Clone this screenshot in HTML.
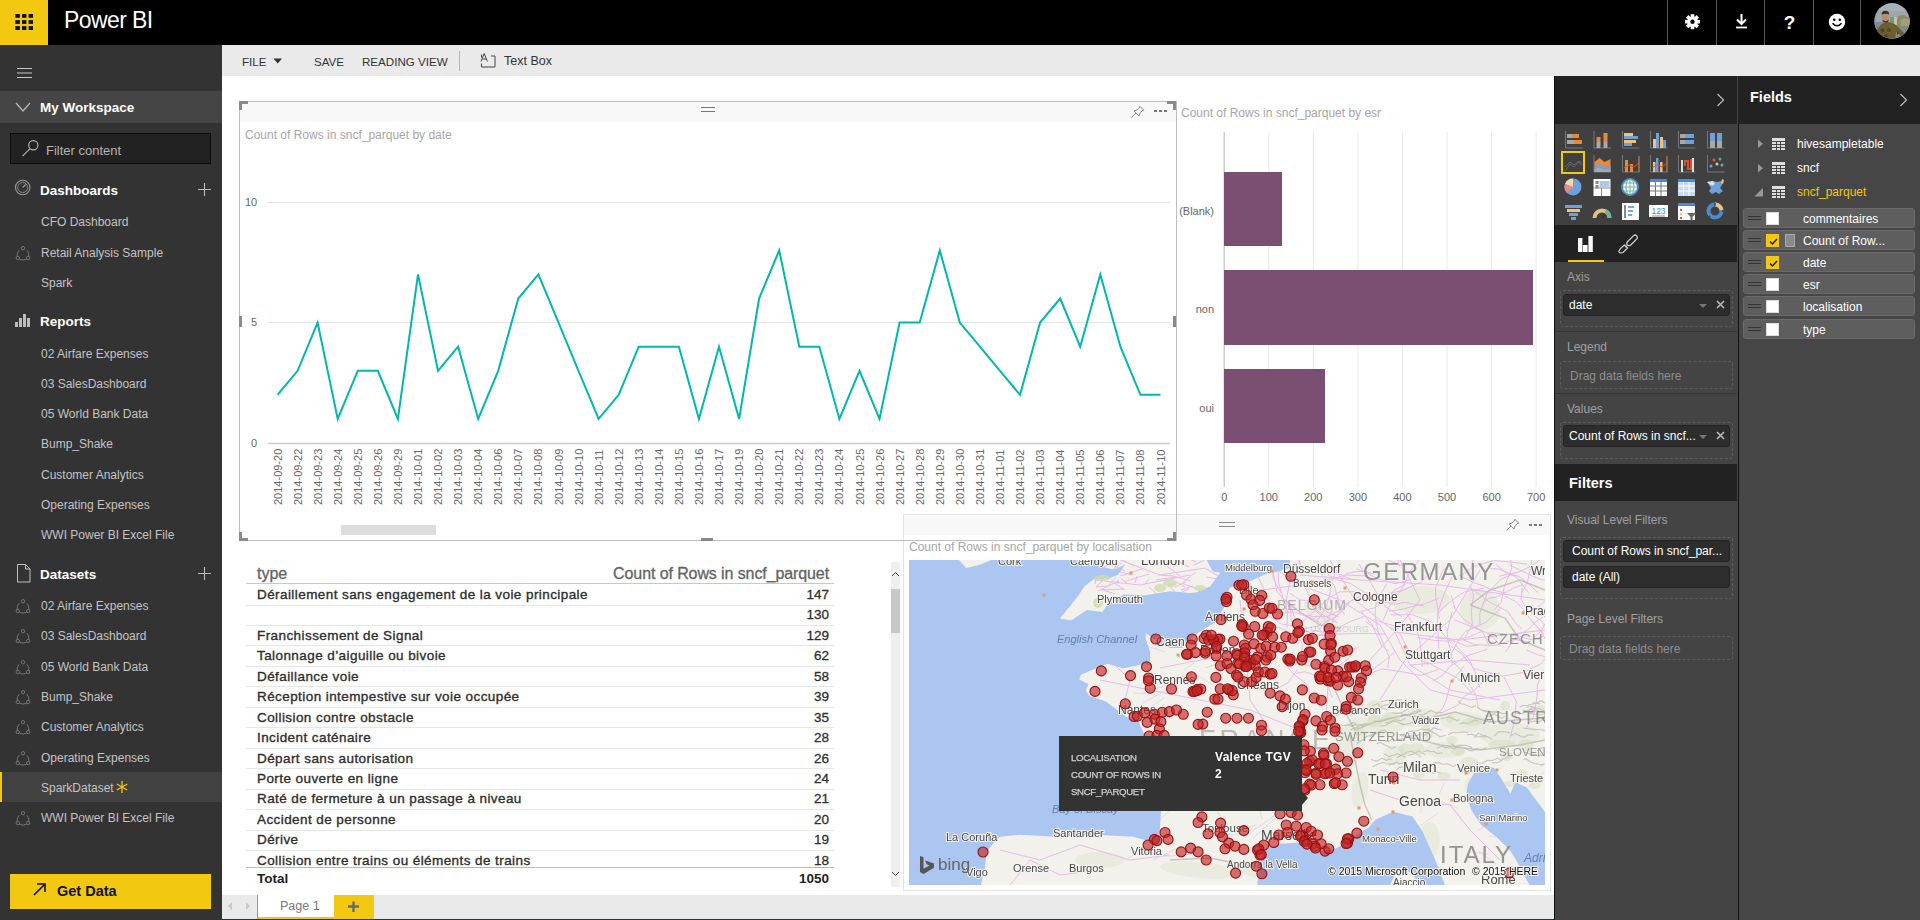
<!DOCTYPE html>
<html><head><meta charset="utf-8">
<style>
*{margin:0;padding:0;box-sizing:border-box}
html,body{width:1920px;height:920px;overflow:hidden;background:#fff;font-family:"Liberation Sans",sans-serif}
.a{position:absolute}
.t{position:absolute;white-space:nowrap;line-height:1}
#top{left:0;top:0;width:1920px;height:45px;background:#000}
#nav{left:0;top:45px;width:222px;height:875px;background:#333}
.ni{position:absolute;left:41px;font-size:12px;color:#c4c4c4;white-space:nowrap;line-height:1}
.nh{position:absolute;left:40px;font-size:13.5px;font-weight:bold;color:#fff;white-space:nowrap;line-height:1}
.dsi{position:absolute;left:16px;width:13px;height:13px}
#tb{left:222px;top:45px;width:1698px;height:31px;background:#eaeaea}
.tbt{position:absolute;font-size:11.6px;color:#333;top:55px;white-space:nowrap;line-height:1}
#viz{left:1554px;top:76px;width:184px;height:844px;background:#444;border-left:1px solid #111}
#fld{left:1738px;top:76px;width:182px;height:844px;background:#464646;border-left:1px solid #111}
.lbl{position:absolute;font-size:12px;color:#a0a0a0;white-space:nowrap;line-height:1}
.dz{position:absolute;left:1560px;width:173px;border:1px dashed #5c5c5c;border-radius:3px}
.pill{position:absolute;left:1563px;width:167px;height:22px;background:#2d2d2d;border:1px solid #242424;border-radius:3px;color:#fff;font-size:12px;line-height:20px;padding-left:5px;white-space:nowrap;overflow:hidden}
.fr{position:absolute;left:1743px;width:172px;height:20px;background:#5e5e5e;border:1px solid #6a6a6a;border-radius:3px}
.fr .g{position:absolute;left:4px;top:7px;width:13px;height:4px;border-top:1px solid #333;border-bottom:1px solid #333}
.fr .cb{position:absolute;left:22px;top:3px;width:13px;height:13px;background:#fff;border:1px solid #ddd}
.fr .cb.on{background:#f2c811;border-color:#f2c811}
.fr .ft{position:absolute;left:59px;top:4px;font-size:12px;color:#fff;white-space:nowrap;line-height:1}
</style></head><body>

<div id="top" class="a"></div>
<div class="a" style="left:0;top:0;width:48px;height:45px;background:#f2c811"></div>
<svg class="a" style="left:0;top:0" width="48" height="45">
<g fill="#111">
<rect x="15.3" y="14" width="4.6" height="3.8"/><rect x="22" y="14" width="4.4" height="3.8"/><rect x="28.6" y="14" width="4.4" height="3.8"/>
<rect x="15.3" y="20.1" width="4.6" height="3.8"/><rect x="22" y="20.1" width="4.4" height="3.8"/><rect x="28.6" y="20.1" width="4.4" height="3.8"/>
<rect x="15.3" y="26.1" width="4.6" height="3.9"/><rect x="22" y="26.1" width="4.4" height="3.9"/><rect x="28.6" y="26.1" width="4.4" height="3.9"/>
</g></svg>
<div class="t" style="left:64px;top:9px;font-size:23px;color:#fff;letter-spacing:-0.6px">Power BI</div>
<div class="a" style="left:1667px;top:0;width:1px;height:45px;background:#5a5a5a"></div>
<div class="a" style="left:1716px;top:0;width:1px;height:45px;background:#5a5a5a"></div>
<div class="a" style="left:1764px;top:0;width:1px;height:45px;background:#5a5a5a"></div>
<div class="a" style="left:1813px;top:0;width:1px;height:45px;background:#5a5a5a"></div>
<div class="a" style="left:1860px;top:0;width:1px;height:45px;background:#5a5a5a"></div>
<svg class="a" style="left:1660px;top:0" width="260" height="45">
<g transform="translate(32.5,21.7)" fill="#fff">
<circle r="5.2"/>
<g><rect x="-1.8" y="-7.5" width="3.6" height="15"/><rect x="-1.8" y="-7.5" width="3.6" height="15" transform="rotate(45)"/><rect x="-1.8" y="-7.5" width="3.6" height="15" transform="rotate(90)"/><rect x="-1.8" y="-7.5" width="3.6" height="15" transform="rotate(135)"/></g>
<circle r="2.2" fill="#000"/>
</g>
<g stroke="#fff" stroke-width="2" fill="none"><path d="M81.5 14v10M77 19.5l4.5 4.5 4.5-4.5"/><path d="M76 27.5h11" stroke-width="1.8"/></g>
<text x="129.5" y="29" font-size="19" font-weight="bold" fill="#fff" text-anchor="middle" font-family="Liberation Sans">?</text>
<g transform="translate(177,22)"><circle r="8.2" fill="#fff"/><circle cx="-2.8" cy="-2.3" r="1.3" fill="#000"/><circle cx="2.8" cy="-2.3" r="1.3" fill="#000"/><path d="M-4.5 1.2 Q0 6.5 4.5 1.2" stroke="#000" stroke-width="1.5" fill="none"/></g>
<defs><clipPath id="avc"><circle cx="232" cy="21" r="17.7"/></clipPath></defs>
<g clip-path="url(#avc)">
<rect x="214" y="3" width="36" height="36" fill="#9ea6ae"/>
<rect x="214" y="3" width="36" height="8" fill="#a9b0b8"/>
<rect x="214" y="22" width="36" height="17" fill="#7e8b97"/>
<path d="M236 24 L238 16 L244 15 L247 17 L250 16 L250 27 L238 28z" fill="#8e8a68"/>
<path d="M240 20 L244 18 L250 19 L250 26 L241 26z" fill="#a39c7a"/>
<rect x="230" y="17" width="4" height="7" fill="#6f9a82"/><rect x="234" y="17" width="3" height="8" fill="#c8c0a0"/>
<path d="M216 40 L217 30 Q220 24 226 22 Q232 22 236 25 L244 33 L242 37 L236 32 L235 40z" fill="#6b5e2f"/>
<path d="M220 30 l3 -2 l2 3 l-3 2z M228 28 l3 1 l-1 3 l-3-1z M237 31 l2 2 l-2 2z M224 35 l3 -1 l1 3 l-3 1z" fill="#4f4522"/>
<ellipse cx="225.5" cy="16.5" rx="3.8" ry="4.6" fill="#b88c6c"/>
<path d="M221.6 14.5 Q221.8 10.5 225.6 10.8 Q229.3 11 229.1 14.5 Q226.8 12.8 221.6 14.5z" fill="#3a3028"/>
<path d="M222.3 19.5 Q225.5 23 228.8 19.5 L228.3 21.5 Q225.5 23.5 222.8 21.5z" fill="#3c2f26"/>
</g>
</svg>

<div id="nav" class="a"></div>
<svg class="a" style="left:0;top:45px" width="222" height="875">
<g stroke="#c8c8c8" stroke-width="1"><path d="M17 23.5h15M17 28h15M17 32.5h15"/></g>
</svg>
<div class="a" style="left:0;top:91px;width:222px;height:32px;background:#454545"></div>
<svg class="a" style="left:0;top:91px" width="40" height="32"><path d="M16 12l7 8 7-8" stroke="#b8b8b8" stroke-width="1.3" fill="none"/></svg>
<div class="nh" style="top:101px">My Workspace</div>
<div class="a" style="left:10px;top:133px;width:201px;height:31px;background:#222;border:1px solid #0c0c0c"></div>
<svg class="a" style="left:0;top:133px" width="46" height="31"><circle cx="33.3" cy="12.3" r="4.6" stroke="#b0b0b0" stroke-width="1.2" fill="none"/><path d="M30 15.6l-7.5 7.5" stroke="#b0b0b0" stroke-width="1.2"/></svg>
<div class="t" style="left:46px;top:144px;font-size:13px;color:#b4b4b4">Filter content</div>

<svg class="a" style="left:0;top:175px" width="222" height="30">
<circle cx="22.7" cy="12.5" r="7.2" stroke="#9a9a9a" stroke-width="1.1" fill="none"/><circle cx="22.7" cy="12.5" r="5" stroke="#9a9a9a" stroke-width="0.8" fill="none"/><path d="M22.7 12.5l3-3" stroke="#9a9a9a" stroke-width="1.2"/>
<path d="M204.5 8v13M198 14.5h13" stroke="#bbb" stroke-width="1.1"/>
</svg>
<div class="nh" style="top:184px">Dashboards</div>
<div class="ni" style="top:216px">CFO Dashboard</div>
<div class="ni" style="top:247px">Retail Analysis Sample</div>
<div class="ni" style="top:277px">Spark</div>

<svg class="a" style="left:0;top:305px" width="40" height="30">
<g fill="#bdbdbd"><rect x="15" y="17" width="3" height="5"/><rect x="19" y="13" width="3" height="9"/><rect x="23" y="9" width="3" height="13"/><rect x="27" y="13" width="3" height="9"/></g>
</svg>
<div class="nh" style="top:315px">Reports</div>
<div class="ni" style="top:348px">02 Airfare Expenses</div>
<div class="ni" style="top:378px">03 SalesDashboard</div>
<div class="ni" style="top:408px">05 World Bank Data</div>
<div class="ni" style="top:438px">Bump_Shake</div>
<div class="ni" style="top:469px">Customer Analytics</div>
<div class="ni" style="top:499px">Operating Expenses</div>
<div class="ni" style="top:529px">WWI Power BI Excel File</div>

<svg class="a" style="left:0;top:560px" width="222" height="30">
<path d="M17.5 4.5h8l4.5 4.5v13h-12.5z M25.5 4.5v4.5h4.5" stroke="#c0c0c0" stroke-width="1" fill="none"/>
<path d="M204.5 7v13M198 13.5h13" stroke="#bbb" stroke-width="1.1"/>
</svg>
<div class="nh" style="top:568px">Datasets</div>
<div class="a" style="left:0;top:772px;width:222px;height:30px;background:#414141"></div>
<div class="a" style="left:0;top:772px;width:2px;height:30px;background:#f2c811"></div>
<svg class="a" style="left:14px;top:597px" width="18" height="18"><g stroke="#7a7a7a" stroke-width="0.9" fill="none"><path d="M5.2 6.2 Q2.5 9 3.2 12.5 M12.8 6.2 Q15.5 9 14.8 12.5 M5.5 15.3 Q9 16.8 12.5 15.3"/><circle cx="9" cy="4.2" r="1.7"/><circle cx="3.8" cy="14" r="1.7"/><circle cx="14.2" cy="14" r="1.7"/></g></svg>
<div class="ni" style="top:600px">02 Airfare Expenses</div>
<svg class="a" style="left:14px;top:627px" width="18" height="18"><g stroke="#7a7a7a" stroke-width="0.9" fill="none"><path d="M5.2 6.2 Q2.5 9 3.2 12.5 M12.8 6.2 Q15.5 9 14.8 12.5 M5.5 15.3 Q9 16.8 12.5 15.3"/><circle cx="9" cy="4.2" r="1.7"/><circle cx="3.8" cy="14" r="1.7"/><circle cx="14.2" cy="14" r="1.7"/></g></svg>
<div class="ni" style="top:630px">03 SalesDashboard</div>
<svg class="a" style="left:14px;top:658px" width="18" height="18"><g stroke="#7a7a7a" stroke-width="0.9" fill="none"><path d="M5.2 6.2 Q2.5 9 3.2 12.5 M12.8 6.2 Q15.5 9 14.8 12.5 M5.5 15.3 Q9 16.8 12.5 15.3"/><circle cx="9" cy="4.2" r="1.7"/><circle cx="3.8" cy="14" r="1.7"/><circle cx="14.2" cy="14" r="1.7"/></g></svg>
<div class="ni" style="top:661px">05 World Bank Data</div>
<svg class="a" style="left:14px;top:688px" width="18" height="18"><g stroke="#7a7a7a" stroke-width="0.9" fill="none"><path d="M5.2 6.2 Q2.5 9 3.2 12.5 M12.8 6.2 Q15.5 9 14.8 12.5 M5.5 15.3 Q9 16.8 12.5 15.3"/><circle cx="9" cy="4.2" r="1.7"/><circle cx="3.8" cy="14" r="1.7"/><circle cx="14.2" cy="14" r="1.7"/></g></svg>
<div class="ni" style="top:691px">Bump_Shake</div>
<svg class="a" style="left:14px;top:718px" width="18" height="18"><g stroke="#7a7a7a" stroke-width="0.9" fill="none"><path d="M5.2 6.2 Q2.5 9 3.2 12.5 M12.8 6.2 Q15.5 9 14.8 12.5 M5.5 15.3 Q9 16.8 12.5 15.3"/><circle cx="9" cy="4.2" r="1.7"/><circle cx="3.8" cy="14" r="1.7"/><circle cx="14.2" cy="14" r="1.7"/></g></svg>
<div class="ni" style="top:721px">Customer Analytics</div>
<svg class="a" style="left:14px;top:749px" width="18" height="18"><g stroke="#7a7a7a" stroke-width="0.9" fill="none"><path d="M5.2 6.2 Q2.5 9 3.2 12.5 M12.8 6.2 Q15.5 9 14.8 12.5 M5.5 15.3 Q9 16.8 12.5 15.3"/><circle cx="9" cy="4.2" r="1.7"/><circle cx="3.8" cy="14" r="1.7"/><circle cx="14.2" cy="14" r="1.7"/></g></svg>
<div class="ni" style="top:752px">Operating Expenses</div>
<div class="ni" style="top:782px">SparkDataset</div>
<svg class="a" style="left:14px;top:809px" width="18" height="18"><g stroke="#7a7a7a" stroke-width="0.9" fill="none"><path d="M5.2 6.2 Q2.5 9 3.2 12.5 M12.8 6.2 Q15.5 9 14.8 12.5 M5.5 15.3 Q9 16.8 12.5 15.3"/><circle cx="9" cy="4.2" r="1.7"/><circle cx="3.8" cy="14" r="1.7"/><circle cx="14.2" cy="14" r="1.7"/></g></svg>
<div class="ni" style="top:812px">WWI Power BI Excel File</div>
<svg class="a" style="left:14px;top:244px" width="18" height="18"><g stroke="#7a7a7a" stroke-width="0.9" fill="none"><path d="M5.2 6.2 Q2.5 9 3.2 12.5 M12.8 6.2 Q15.5 9 14.8 12.5 M5.5 15.3 Q9 16.8 12.5 15.3"/><circle cx="9" cy="4.2" r="1.7"/><circle cx="3.8" cy="14" r="1.7"/><circle cx="14.2" cy="14" r="1.7"/></g></svg>
<svg class="a" style="left:115px;top:780px" width="14" height="14"><g stroke="#f2c811" stroke-width="1.3"><path d="M7 1v12M1.8 4l10.4 6M1.8 10l10.4-6"/></g></svg>
<div class="a" style="left:10px;top:874px;width:201px;height:35px;background:#f2c811"></div>
<svg class="a" style="left:30px;top:880px" width="20" height="20"><path d="M4 15L15 4M7 4h8v8" stroke="#111" stroke-width="1.6" fill="none"/></svg>
<div class="t" style="left:57px;top:884px;font-size:14.5px;font-weight:bold;color:#111">Get Data</div>
<div id="tb" class="a"></div>
<div class="a" style="left:222px;top:76px;width:1331px;height:817px;background:#fff"></div>
<div class="tbt" style="left:242px;top:56px">FILE</div>
<svg class="a" style="left:270px;top:55px" width="16" height="12"><path d="M3.5 3.5h8.5l-4.25 5z" fill="#333"/></svg>
<div class="tbt" style="left:314px;top:56px">SAVE</div>
<div class="tbt" style="left:362px;top:56px">READING VIEW</div>
<div class="a" style="left:459px;top:51px;width:1px;height:20px;background:#b5b5b5"></div>
<svg class="a" style="left:476px;top:50px" width="24" height="20"><g stroke="#444" stroke-width="1" fill="none"><path d="M5.5 4.5v3M5.5 13.5v3.5h13.5v-11h-4"/><path d="M5 11.5l3.2-8 3.2 8M6.2 9h4"/></g></svg>
<div class="tbt" style="left:504px;top:55px;font-size:12.5px">Text Box</div>

<svg class="a" style="left:0;top:0" width="1553" height="893">
<rect x="240" y="102" width="936" height="20" fill="#f8f8f8"/>
<path d="M701 107.5h14M701 111.5h14" stroke="#777" stroke-width="1"/>
<g transform="translate(1131,106)" stroke="#8c8c8c" stroke-width="1" fill="none"><path d="M0.5 11.5l4.5-4.5"/><path d="M3 5l5 5l1-3l3-3l0.8 0.2l-4-4l0.2 0.8l-3 3z" stroke-linejoin="round"/></g>
<g fill="#777"><rect x="1154" y="110" width="3" height="2"/><rect x="1159" y="110" width="3" height="2"/><rect x="1164" y="110" width="3" height="2"/></g>
<path d="M268 202.5H1170M268 322.5H1170" stroke="#e6e6e6" stroke-width="1"/>
<path d="M268 443.5H1170" stroke="#cccccc" stroke-width="1.3"/>
<polyline points="277.5,394.8 297.6,370.8 317.6,322.6 337.7,418.9 357.8,370.8 377.8,370.8 397.9,418.9 418.0,274.4 438.0,370.8 458.1,346.7 478.2,418.9 498.2,370.8 518.3,298.5 538.4,274.4 558.5,322.6 578.5,370.8 598.6,418.9 618.7,394.8 638.7,346.7 658.8,346.7 678.9,346.7 698.9,418.9 719.0,346.7 739.1,418.9 759.1,298.5 779.2,250.4 799.3,346.7 819.3,346.7 839.4,418.9 859.5,370.8 879.5,418.9 899.6,322.6 919.7,322.6 939.8,250.4 959.8,322.6 979.9,346.7 1000.0,370.8 1020.0,394.8 1040.1,322.6 1060.2,298.5 1080.2,346.7 1100.3,274.4 1120.4,346.7 1140.4,394.8 1160.5,394.8" fill="none" stroke="#01b8aa" stroke-width="2" stroke-linejoin="miter"/>
<g font-family="Liberation Sans" font-size="11" fill="#666">
<text x="245" y="206">10</text><text x="251" y="326">5</text><text x="251" y="447">0</text>
<text transform="translate(281.5,505) rotate(-90)">2014-09-20</text>
<text transform="translate(301.6,505) rotate(-90)">2014-09-22</text>
<text transform="translate(321.6,505) rotate(-90)">2014-09-23</text>
<text transform="translate(341.7,505) rotate(-90)">2014-09-24</text>
<text transform="translate(361.8,505) rotate(-90)">2014-09-25</text>
<text transform="translate(381.8,505) rotate(-90)">2014-09-26</text>
<text transform="translate(401.9,505) rotate(-90)">2014-09-29</text>
<text transform="translate(422.0,505) rotate(-90)">2014-10-01</text>
<text transform="translate(442.0,505) rotate(-90)">2014-10-02</text>
<text transform="translate(462.1,505) rotate(-90)">2014-10-03</text>
<text transform="translate(482.2,505) rotate(-90)">2014-10-04</text>
<text transform="translate(502.2,505) rotate(-90)">2014-10-06</text>
<text transform="translate(522.3,505) rotate(-90)">2014-10-07</text>
<text transform="translate(542.4,505) rotate(-90)">2014-10-08</text>
<text transform="translate(562.5,505) rotate(-90)">2014-10-09</text>
<text transform="translate(582.5,505) rotate(-90)">2014-10-10</text>
<text transform="translate(602.6,505) rotate(-90)">2014-10-11</text>
<text transform="translate(622.7,505) rotate(-90)">2014-10-12</text>
<text transform="translate(642.7,505) rotate(-90)">2014-10-13</text>
<text transform="translate(662.8,505) rotate(-90)">2014-10-14</text>
<text transform="translate(682.9,505) rotate(-90)">2014-10-15</text>
<text transform="translate(702.9,505) rotate(-90)">2014-10-16</text>
<text transform="translate(723.0,505) rotate(-90)">2014-10-17</text>
<text transform="translate(743.1,505) rotate(-90)">2014-10-19</text>
<text transform="translate(763.1,505) rotate(-90)">2014-10-20</text>
<text transform="translate(783.2,505) rotate(-90)">2014-10-21</text>
<text transform="translate(803.3,505) rotate(-90)">2014-10-22</text>
<text transform="translate(823.3,505) rotate(-90)">2014-10-23</text>
<text transform="translate(843.4,505) rotate(-90)">2014-10-24</text>
<text transform="translate(863.5,505) rotate(-90)">2014-10-25</text>
<text transform="translate(883.5,505) rotate(-90)">2014-10-26</text>
<text transform="translate(903.6,505) rotate(-90)">2014-10-27</text>
<text transform="translate(923.7,505) rotate(-90)">2014-10-28</text>
<text transform="translate(943.8,505) rotate(-90)">2014-10-29</text>
<text transform="translate(963.8,505) rotate(-90)">2014-10-30</text>
<text transform="translate(983.9,505) rotate(-90)">2014-10-31</text>
<text transform="translate(1004.0,505) rotate(-90)">2014-11-01</text>
<text transform="translate(1024.0,505) rotate(-90)">2014-11-02</text>
<text transform="translate(1044.1,505) rotate(-90)">2014-11-03</text>
<text transform="translate(1064.2,505) rotate(-90)">2014-11-04</text>
<text transform="translate(1084.2,505) rotate(-90)">2014-11-05</text>
<text transform="translate(1104.3,505) rotate(-90)">2014-11-06</text>
<text transform="translate(1124.4,505) rotate(-90)">2014-11-07</text>
<text transform="translate(1144.4,505) rotate(-90)">2014-11-08</text>
<text transform="translate(1164.5,505) rotate(-90)">2014-11-10</text>
</g>
<rect x="341" y="525" width="95" height="10" fill="#dcdcdc"/>
<text x="245" y="139" font-family="Liberation Sans" font-size="12" fill="#a6a6a6">Count of Rows in sncf_parquet by date</text>
<text x="1181" y="117" font-family="Liberation Sans" font-size="12" fill="#a6a6a6">Count of Rows in sncf_parquet by esr</text>
<path d="M1268.8 132V487" stroke="#e8e8e8" stroke-width="1"/>
<path d="M1313.3 132V487" stroke="#e8e8e8" stroke-width="1"/>
<path d="M1357.9 132V487" stroke="#e8e8e8" stroke-width="1"/>
<path d="M1402.4 132V487" stroke="#e8e8e8" stroke-width="1"/>
<path d="M1447.0 132V487" stroke="#e8e8e8" stroke-width="1"/>
<path d="M1491.6 132V487" stroke="#e8e8e8" stroke-width="1"/>
<path d="M1536.1 132V487" stroke="#e8e8e8" stroke-width="1"/>
<path d="M1224.2 132V487" stroke="#c0c0c0" stroke-width="1.2"/>
<rect x="1224" y="172" width="58" height="74" fill="#7b4f71"/>
<rect x="1224" y="270" width="309" height="75" fill="#7b4f71"/>
<rect x="1224" y="369" width="101" height="74" fill="#7b4f71"/>
<g font-family="Liberation Sans" font-size="11" fill="#666">
<text x="1214" y="215" text-anchor="end">(Blank)</text><text x="1214" y="313" text-anchor="end">non</text><text x="1214" y="412" text-anchor="end">oui</text>
<text x="1224.2" y="501" text-anchor="middle">0</text>
<text x="1268.8" y="501" text-anchor="middle">100</text>
<text x="1313.3" y="501" text-anchor="middle">200</text>
<text x="1357.9" y="501" text-anchor="middle">300</text>
<text x="1402.4" y="501" text-anchor="middle">400</text>
<text x="1447.0" y="501" text-anchor="middle">500</text>
<text x="1491.6" y="501" text-anchor="middle">600</text>
<text x="1536.1" y="501" text-anchor="middle">700</text>
</g>
<rect x="903.5" y="514.5" width="647" height="376" fill="none" stroke="#e4e4e4" stroke-width="1"/>
<rect x="904" y="515" width="646" height="20" fill="#f8f8f8"/>
<path d="M1219 522.5h16M1219 526.5h16" stroke="#888" stroke-width="1"/>
<g transform="translate(1506,519)" stroke="#8c8c8c" stroke-width="1" fill="none"><path d="M0.5 11.5l4.5-4.5"/><path d="M3 5l5 5l1-3l3-3l0.8 0.2l-4-4l0.2 0.8l-3 3z" stroke-linejoin="round"/></g>
<g fill="#777"><rect x="1529" y="524" width="3" height="2"/><rect x="1534" y="524" width="3" height="2"/><rect x="1539" y="524" width="3" height="2"/></g>
<text x="909" y="551" font-family="Liberation Sans" font-size="12" fill="#a6a6a6">Count of Rows in sncf_parquet by localisation</text>
<rect x="239.5" y="101.5" width="937" height="439" fill="none" stroke="#bdbdbd" stroke-width="1"/>
<rect x="239" y="101" width="9" height="3" fill="#8a8a8a"/>
<rect x="239" y="101" width="3" height="9" fill="#8a8a8a"/>
<rect x="1167" y="101" width="9" height="3" fill="#8a8a8a"/>
<rect x="1173" y="101" width="3" height="9" fill="#8a8a8a"/>
<rect x="239" y="538" width="9" height="3" fill="#8a8a8a"/>
<rect x="239" y="532" width="3" height="9" fill="#8a8a8a"/>
<rect x="1167" y="538" width="9" height="3" fill="#8a8a8a"/>
<rect x="1173" y="532" width="3" height="9" fill="#8a8a8a"/>
<rect x="701" y="538" width="12" height="3" fill="#8a8a8a"/>
<rect x="1173" y="316" width="3" height="11" fill="#8a8a8a"/>
<rect x="239" y="316" width="3" height="11" fill="#8a8a8a"/>
</svg>
<div class="a" style="left:240px;top:562px;width:660px;height:306px;overflow:hidden">
<div class="t" style="left:17px;top:4px;font-size:16px;color:#636363;-webkit-text-stroke:0.3px #636363">type</div>
<div class="t" style="left:289px;top:4px;font-size:16px;color:#636363;-webkit-text-stroke:0.3px #636363;width:300px;text-align:right;letter-spacing:-0.1px">Count of Rows in sncf_parquet</div>
<div class="a" style="left:6px;top:21px;width:588px;height:1px;background:#c8c8c8"></div>
<div class="t" style="left:17px;top:25.7px;font-size:13.5px;color:#2e2e2e;letter-spacing:0.42px;-webkit-text-stroke:0.35px #2e2e2e">Déraillement sans engagement de la voie principale</div>
<div class="t" style="left:489px;top:25.7px;width:100px;text-align:right;font-size:13.5px;color:#2e2e2e;-webkit-text-stroke:0.3px #2e2e2e">147</div>
<div class="a" style="left:6px;top:42.5px;width:588px;height:1px;background:#e6e6e6"></div>
<div class="t" style="left:17px;top:46.2px;font-size:13.5px;color:#2e2e2e;letter-spacing:0.42px;-webkit-text-stroke:0.35px #2e2e2e"></div>
<div class="t" style="left:489px;top:46.2px;width:100px;text-align:right;font-size:13.5px;color:#2e2e2e;-webkit-text-stroke:0.3px #2e2e2e">130</div>
<div class="a" style="left:6px;top:63.0px;width:588px;height:1px;background:#e6e6e6"></div>
<div class="t" style="left:17px;top:66.6px;font-size:13.5px;color:#2e2e2e;letter-spacing:0.42px;-webkit-text-stroke:0.35px #2e2e2e">Franchissement de Signal</div>
<div class="t" style="left:489px;top:66.6px;width:100px;text-align:right;font-size:13.5px;color:#2e2e2e;-webkit-text-stroke:0.3px #2e2e2e">129</div>
<div class="a" style="left:6px;top:83.4px;width:588px;height:1px;background:#e6e6e6"></div>
<div class="t" style="left:17px;top:87.1px;font-size:13.5px;color:#2e2e2e;letter-spacing:0.42px;-webkit-text-stroke:0.35px #2e2e2e">Talonnage d’aiguille ou bivoie</div>
<div class="t" style="left:489px;top:87.1px;width:100px;text-align:right;font-size:13.5px;color:#2e2e2e;-webkit-text-stroke:0.3px #2e2e2e">62</div>
<div class="a" style="left:6px;top:103.9px;width:588px;height:1px;background:#e6e6e6"></div>
<div class="t" style="left:17px;top:107.6px;font-size:13.5px;color:#2e2e2e;letter-spacing:0.42px;-webkit-text-stroke:0.35px #2e2e2e">Défaillance voie</div>
<div class="t" style="left:489px;top:107.6px;width:100px;text-align:right;font-size:13.5px;color:#2e2e2e;-webkit-text-stroke:0.3px #2e2e2e">58</div>
<div class="a" style="left:6px;top:124.3px;width:588px;height:1px;background:#e6e6e6"></div>
<div class="t" style="left:17px;top:128.1px;font-size:13.5px;color:#2e2e2e;letter-spacing:0.42px;-webkit-text-stroke:0.35px #2e2e2e">Réception intempestive sur voie occupée</div>
<div class="t" style="left:489px;top:128.1px;width:100px;text-align:right;font-size:13.5px;color:#2e2e2e;-webkit-text-stroke:0.3px #2e2e2e">39</div>
<div class="a" style="left:6px;top:144.8px;width:588px;height:1px;background:#e6e6e6"></div>
<div class="t" style="left:17px;top:148.5px;font-size:13.5px;color:#2e2e2e;letter-spacing:0.42px;-webkit-text-stroke:0.35px #2e2e2e">Collision contre obstacle</div>
<div class="t" style="left:489px;top:148.5px;width:100px;text-align:right;font-size:13.5px;color:#2e2e2e;-webkit-text-stroke:0.3px #2e2e2e">35</div>
<div class="a" style="left:6px;top:165.3px;width:588px;height:1px;background:#e6e6e6"></div>
<div class="t" style="left:17px;top:169.0px;font-size:13.5px;color:#2e2e2e;letter-spacing:0.42px;-webkit-text-stroke:0.35px #2e2e2e">Incident caténaire</div>
<div class="t" style="left:489px;top:169.0px;width:100px;text-align:right;font-size:13.5px;color:#2e2e2e;-webkit-text-stroke:0.3px #2e2e2e">28</div>
<div class="a" style="left:6px;top:185.7px;width:588px;height:1px;background:#e6e6e6"></div>
<div class="t" style="left:17px;top:189.5px;font-size:13.5px;color:#2e2e2e;letter-spacing:0.42px;-webkit-text-stroke:0.35px #2e2e2e">Départ sans autorisation</div>
<div class="t" style="left:489px;top:189.5px;width:100px;text-align:right;font-size:13.5px;color:#2e2e2e;-webkit-text-stroke:0.3px #2e2e2e">26</div>
<div class="a" style="left:6px;top:206.2px;width:588px;height:1px;background:#e6e6e6"></div>
<div class="t" style="left:17px;top:209.9px;font-size:13.5px;color:#2e2e2e;letter-spacing:0.42px;-webkit-text-stroke:0.35px #2e2e2e">Porte ouverte en ligne</div>
<div class="t" style="left:489px;top:209.9px;width:100px;text-align:right;font-size:13.5px;color:#2e2e2e;-webkit-text-stroke:0.3px #2e2e2e">24</div>
<div class="a" style="left:6px;top:226.6px;width:588px;height:1px;background:#e6e6e6"></div>
<div class="t" style="left:17px;top:230.4px;font-size:13.5px;color:#2e2e2e;letter-spacing:0.42px;-webkit-text-stroke:0.35px #2e2e2e">Raté de fermeture à un passage à niveau</div>
<div class="t" style="left:489px;top:230.4px;width:100px;text-align:right;font-size:13.5px;color:#2e2e2e;-webkit-text-stroke:0.3px #2e2e2e">21</div>
<div class="a" style="left:6px;top:247.1px;width:588px;height:1px;background:#e6e6e6"></div>
<div class="t" style="left:17px;top:250.9px;font-size:13.5px;color:#2e2e2e;letter-spacing:0.42px;-webkit-text-stroke:0.35px #2e2e2e">Accident de personne</div>
<div class="t" style="left:489px;top:250.9px;width:100px;text-align:right;font-size:13.5px;color:#2e2e2e;-webkit-text-stroke:0.3px #2e2e2e">20</div>
<div class="a" style="left:6px;top:267.6px;width:588px;height:1px;background:#e6e6e6"></div>
<div class="t" style="left:17px;top:271.3px;font-size:13.5px;color:#2e2e2e;letter-spacing:0.42px;-webkit-text-stroke:0.35px #2e2e2e">Dérive</div>
<div class="t" style="left:489px;top:271.3px;width:100px;text-align:right;font-size:13.5px;color:#2e2e2e;-webkit-text-stroke:0.3px #2e2e2e">19</div>
<div class="a" style="left:6px;top:288.0px;width:588px;height:1px;background:#e6e6e6"></div>
<div class="t" style="left:17px;top:291.8px;font-size:13.5px;color:#2e2e2e;letter-spacing:0.42px;-webkit-text-stroke:0.35px #2e2e2e">Collision entre trains ou éléments de trains</div>
<div class="t" style="left:489px;top:291.8px;width:100px;text-align:right;font-size:13.5px;color:#2e2e2e;-webkit-text-stroke:0.3px #2e2e2e">18</div>
<div class="a" style="left:6px;top:308.5px;width:588px;height:1px;background:#e6e6e6"></div>
</div>
<div class="a" style="left:246px;top:867px;width:588px;height:1px;background:#b8b8b8"></div>
<div class="t" style="left:257px;top:872px;font-size:13.5px;color:#222;font-weight:bold">Total</div>
<div class="t" style="left:729px;top:872px;width:100px;text-align:right;font-size:13.5px;color:#222;font-weight:bold">1050</div>
<div class="a" style="left:891px;top:562px;width:9px;height:325px;background:#efefef"></div>
<div class="a" style="left:891px;top:589px;width:9px;height:44px;background:#c8c8c8"></div>
<svg class="a" style="left:889px;top:568px" width="13" height="12"><path d="M3 8l3.5-3.5 3.5 3.5" stroke="#444" stroke-width="1" fill="none"/></svg>
<svg class="a" style="left:889px;top:868px" width="13" height="12"><path d="M3 4l3.5 3.5 3.5-3.5" stroke="#444" stroke-width="1" fill="none"/></svg>
<div class="a" style="left:222px;top:895px;width:1332px;height:25px;background:#eaeaea"></div>
<svg class="a" style="left:222px;top:895px" width="160" height="25">
<path d="M6 11l4-4v8z" fill="#c8c8c8"/><path d="M24 7v8l4-4z" fill="#c8c8c8"/>
<rect x="35" y="0" width="1.2" height="25" fill="#999"/>
<rect x="36" y="0" width="76" height="24" fill="#fff"/>
<rect x="36" y="22" width="76" height="2" fill="#f2c811"/>
<rect x="112" y="0" width="40" height="24" fill="#f2c811"/>
<path d="M131.5 6.5v10.5M126 11.5h11" stroke="#6a6a6a" stroke-width="2.4"/>
</svg>
<div class="a" style="left:222px;top:919px;width:1698px;height:1px;background:#2a3440"></div>
<div class="t" style="left:280px;top:900px;font-size:12.5px;color:#777">Page 1</div>

<svg class="a" style="left:909px;top:560px" width="636" height="325">
<defs><clipPath id="mc"><rect width="636" height="325"/></clipPath></defs><g clip-path="url(#mc)">
<rect width="636" height="325" fill="#f3f1ec"/>
<g fill="#d5dcc4" opacity="0.3">
<ellipse cx="441" cy="185" rx="14" ry="30" transform="rotate(20 441 185)"/>
<ellipse cx="471" cy="165" rx="25" ry="10" transform="rotate(0 471 165)"/>
<ellipse cx="511" cy="158" rx="22" ry="9" transform="rotate(-5 511 158)"/>
<ellipse cx="556" cy="162" rx="25" ry="10" transform="rotate(5 556 162)"/>
<ellipse cx="601" cy="175" rx="30" ry="12" transform="rotate(0 601 175)"/>
<ellipse cx="536" cy="190" rx="20" ry="8" transform="rotate(0 536 190)"/>
<ellipse cx="486" cy="195" rx="12" ry="10" transform="rotate(0 486 195)"/>
<ellipse cx="451" cy="230" rx="8" ry="18" transform="rotate(10 451 230)"/>
<ellipse cx="411" cy="52" rx="18" ry="10" transform="rotate(30 411 52)"/>
<ellipse cx="511" cy="40" rx="30" ry="14" transform="rotate(0 511 40)"/>
<ellipse cx="571" cy="50" rx="20" ry="20" transform="rotate(0 571 50)"/>
<ellipse cx="291" cy="310" rx="40" ry="8" transform="rotate(5 291 310)"/>
<ellipse cx="361" cy="315" rx="30" ry="6" transform="rotate(10 361 315)"/>
<ellipse cx="191" cy="300" rx="25" ry="8" transform="rotate(0 191 300)"/>
<ellipse cx="571" cy="240" rx="10" ry="25" transform="rotate(-30 571 240)"/>
<ellipse cx="521" cy="280" rx="10" ry="18" transform="rotate(0 521 280)"/>
</g>
<g stroke="#a3a39a" stroke-width="1.4" fill="none" opacity="0.55">
<path d="M426.0,130.0 436.0,152.0 446.0,170.0 466.0,162.0 496.0,155.0 521.0,158.0 546.0,152.0 581.0,162.0 636.0,158.0"/>
<path d="M441.0,175.0 446.0,200.0 451.0,225.0 456.0,245.0 463.0,260.0"/>
<path d="M261.0,300.0 301.0,298.0 341.0,306.0 381.0,320.0"/>
<path d="M561.0,45.0 596.0,58.0 611.0,80.0 636.0,90.0"/>
<path d="M561.0,45.0 581.0,30.0 611.0,20.0 636.0,30.0"/>
<path d="M376.0,40.0 391.0,52.0 411.0,65.0 431.0,68.0"/>
<path d="M491.0,175.0 531.0,185.0 571.0,190.0 611.0,185.0 636.0,180.0"/>
</g>
<g stroke="#a8a8a0" stroke-width="1.1" fill="none" opacity="0.6">
<path d="M476.0,180.8 479.5,181.4 484.0,178.8 486.0,180.9 489.0,179.3 495.0,179.1"/>
<path d="M601.7,175.7 606.2,173.6 610.8,175.8 614.8,177.3 619.5,174.7 624.6,175.2"/>
<path d="M489.3,142.3 494.7,142.2 499.6,144.4 504.5,147.0 508.0,148.8 511.8,151.4"/>
<path d="M610.6,147.3 613.1,145.6 619.0,145.2 623.5,144.0 627.5,143.3 630.9,143.9"/>
<path d="M548.7,207.8 553.4,210.4 558.8,213.3 563.5,211.3 569.0,214.1 574.6,214.5"/>
<path d="M575.9,155.8 581.2,156.3 584.4,153.7 589.8,156.6 592.1,158.4 595.8,156.3"/>
<path d="M487.7,197.7 493.2,194.9 497.7,192.2 502.5,191.2 508.1,194.1 512.1,197.1"/>
<path d="M491.0,145.8 495.4,143.0 498.2,142.4 502.7,140.3 504.8,142.6 508.1,145.3"/>
<path d="M614.3,168.3 618.1,168.5 622.7,169.0 627.0,169.7 632.7,169.8 636.4,171.1"/>
<path d="M475.9,162.6 481.8,162.7 486.0,159.8 489.7,160.3 491.7,161.0 496.3,158.3"/>
<path d="M557.7,175.0 562.5,174.1 567.3,175.5 569.4,172.9 574.1,175.7 577.1,175.4"/>
<path d="M550.5,164.0 553.9,162.9 557.4,163.5 560.6,162.7 565.7,159.9 570.0,161.3"/>
<path d="M491.1,156.7 496.3,155.1 499.1,154.7 503.9,152.3 507.1,151.3 512.5,151.0"/>
<path d="M605.7,152.7 609.0,153.6 614.5,153.3 617.4,151.0 621.6,149.2 626.8,151.2"/>
<path d="M464.6,160.9 469.8,161.7 475.0,160.8 477.5,159.6 482.7,158.2 486.1,157.7"/>
<path d="M514.2,170.7 519.8,168.7 521.9,171.3 527.4,174.2 531.1,176.9 536.8,175.3"/>
<path d="M582.6,202.8 587.2,202.9 590.4,201.9 593.3,199.3 597.6,198.0 602.9,195.3"/>
<path d="M615.8,192.0 621.5,194.4 627.1,194.9 629.1,196.3 631.8,195.1 636.4,195.3"/>
<path d="M512.9,210.4 517.3,209.5 520.3,211.6 524.3,213.3 527.7,211.5 531.8,213.4"/>
<path d="M462.0,199.4 467.7,201.2 473.0,198.3 477.5,200.4 479.7,199.1 482.7,199.2"/>
<path d="M514.8,175.5 519.9,172.5 522.2,170.2 524.7,167.7 530.5,169.8 532.9,169.8"/>
<path d="M492.3,163.6 495.7,164.5 500.1,163.6 502.9,162.6 505.3,162.9 510.2,162.2"/>
<path d="M442.8,153.4 446.3,154.0 451.4,153.3 456.6,154.0 460.3,153.3 464.3,154.5"/>
<path d="M514.3,192.1 518.2,190.5 522.3,191.7 524.6,191.3 528.3,193.5 534.0,192.8"/>
<path d="M614.5,199.3 617.6,199.1 620.1,201.0 624.7,203.3 629.9,204.3 634.8,204.7"/>
<path d="M447.7,184.1 449.7,181.9 454.8,179.2 457.1,176.8 462.7,174.9 464.8,176.9"/>
<path d="M567.4,202.7 573.3,203.2 578.4,200.4 583.5,200.5 588.4,198.1 593.4,200.7"/>
<path d="M438.8,164.3 443.1,166.3 446.1,164.4 449.1,165.1 454.1,164.4 457.5,163.8"/>
<path d="M499.6,171.4 501.9,171.4 507.8,170.8 512.8,168.8 517.5,170.3 522.2,170.4"/>
<path d="M527.6,188.2 533.2,186.1 535.6,187.6 541.2,187.7 545.0,189.0 547.7,187.6"/>
<path d="M467.8,183.9 471.1,182.3 475.9,185.0 479.0,186.3 482.7,188.4 487.0,187.0"/>
<path d="M471.7,141.7 475.6,141.0 478.3,140.2 481.6,141.8 484.2,144.8 488.1,145.4"/>
<path d="M524.3,202.6 529.6,202.9 533.5,204.3 538.9,203.7 543.9,206.4 547.7,204.8"/>
<path d="M475.3,193.8 480.0,196.6 485.4,195.0 488.2,193.6 490.9,194.8 496.4,197.2"/>
<path d="M479.6,204.9 482.8,204.4 487.7,201.9 490.1,203.9 493.3,203.1 497.6,204.1"/>
<path d="M427.4,165.1 431.2,165.0 434.0,165.5 439.9,164.9 444.0,162.6 447.1,163.6"/>
<path d="M616.8,147.3 622.6,146.5 627.7,148.1 630.9,149.1 635.5,150.9 638.6,152.5"/>
<path d="M627.9,190.5 632.0,188.1 636.0,187.3 640.9,188.3 645.1,186.4 649.7,187.2"/>
<path d="M463.6,206.7 468.2,204.5 474.0,202.3 477.3,203.7 481.7,204.0 486.3,203.7"/>
<path d="M491.6,153.2 493.9,154.5 498.9,154.8 503.9,153.9 506.9,153.2 512.4,150.5"/>
<path d="M532.0,158.5 537.1,157.7 540.4,157.1 544.6,158.7 548.0,160.8 550.4,159.4"/>
<path d="M446.9,148.5 452.0,149.8 454.8,148.0 458.4,149.4 463.7,150.9 468.1,148.8"/>
<path d="M509.7,154.5 513.8,154.9 516.6,153.4 521.7,150.6 526.9,153.0 532.7,152.3"/>
<path d="M542.0,183.7 546.6,186.6 551.3,185.4 556.8,185.3 561.2,186.7 563.2,188.3"/>
<path d="M565.0,176.9 569.1,176.7 571.9,176.8 574.0,176.8 578.6,176.5 582.9,179.3"/>
<path d="M613.3,150.2 618.5,150.9 620.7,150.1 623.6,147.5 627.8,150.1 631.1,152.3"/>
<path d="M571.9,150.1 577.3,150.7 583.0,152.0 588.0,151.0 593.2,153.6 598.7,153.3"/>
<path d="M584.9,176.4 587.4,173.6 589.7,171.8 592.3,171.8 597.1,172.0 600.8,172.9"/>
<path d="M490.0,174.8 495.0,174.2 497.7,176.6 502.6,175.8 506.1,176.0 510.5,174.4"/>
<path d="M426.6,155.7 431.7,153.5 435.5,151.7 438.4,149.7 442.0,147.7 444.1,145.4"/>
<path d="M461.3,176.8 463.6,173.9 467.4,173.4 472.2,170.7 475.8,170.0 477.9,172.8"/>
<path d="M472.0,147.1 475.9,145.1 480.4,144.1 482.9,141.4 487.8,140.1 492.9,139.9"/>
<path d="M621.9,162.5 624.9,161.1 630.2,161.9 633.6,159.5 638.3,162.3 642.6,159.3"/>
<path d="M432.4,146.8 435.0,144.0 437.3,144.9 442.9,143.1 448.8,143.0 454.0,145.5"/>
<path d="M623.4,142.6 626.6,143.2 632.4,140.7 635.6,142.8 638.1,142.2 641.4,143.3"/>
<path d="M621.0,153.1 625.9,154.5 631.3,154.8 637.0,154.0 640.6,152.4 645.8,152.3"/>
<path d="M482.6,152.7 487.5,153.4 492.3,152.7 496.3,150.6 501.1,147.7 505.0,149.3"/>
<path d="M568.2,147.3 571.2,149.3 575.8,151.6 581.2,151.3 586.8,152.7 590.2,151.9"/>
<path d="M441.1,169.9 447.0,167.6 451.2,165.2 453.6,166.1 456.5,163.4 459.1,164.3"/>
<path d="M549.0,140.9 551.9,143.7 554.8,144.1 558.4,145.7 562.9,147.5 567.0,145.6"/>
<path d="M463.3,145.9 468.6,143.6 470.7,146.4 473.5,148.8 475.8,148.6 478.7,150.5"/>
<path d="M555.2,188.1 560.3,190.4 563.7,191.0 567.5,188.6 572.8,189.2 578.1,187.5"/>
<path d="M539.2,174.8 544.1,172.3 547.5,172.2 549.8,172.5 554.8,172.0 559.3,172.7"/>
<path d="M471.0,166.3 477.0,165.3 480.7,162.8 483.6,160.8 489.3,162.2 494.8,165.1"/>
<path d="M554.6,209.9 558.7,209.4 564.5,211.8 570.3,211.7 575.4,211.1 581.4,213.7"/>
<path d="M487.3,210.1 490.1,207.6 495.0,206.4 499.0,207.2 501.2,208.7 504.3,208.3"/>
<path d="M498.4,195.7 503.4,194.4 505.8,193.2 509.5,190.6 512.1,192.2 516.9,195.1"/>
<path d="M631.7,205.7 635.2,203.7 638.5,203.5 642.6,203.7 646.0,205.8 649.1,205.6"/>
</g>
<g fill="#c8d4b0" opacity="0.35">
<ellipse cx="613" cy="214" rx="6" ry="4"/>
<ellipse cx="596" cy="146" rx="5" ry="5"/>
<ellipse cx="541" cy="159" rx="4" ry="4"/>
<ellipse cx="589" cy="185" rx="10" ry="5"/>
<ellipse cx="632" cy="148" rx="5" ry="3"/>
<ellipse cx="520" cy="174" rx="4" ry="5"/>
<ellipse cx="450" cy="171" rx="5" ry="5"/>
<ellipse cx="517" cy="167" rx="4" ry="4"/>
<ellipse cx="560" cy="202" rx="9" ry="5"/>
<ellipse cx="482" cy="157" rx="9" ry="5"/>
<ellipse cx="535" cy="216" rx="7" ry="4"/>
<ellipse cx="466" cy="146" rx="8" ry="6"/>
<ellipse cx="617" cy="185" rx="8" ry="6"/>
<ellipse cx="598" cy="196" rx="6" ry="5"/>
<ellipse cx="466" cy="161" rx="8" ry="6"/>
<ellipse cx="543" cy="180" rx="6" ry="4"/>
<ellipse cx="596" cy="183" rx="10" ry="3"/>
<ellipse cx="496" cy="189" rx="6" ry="6"/>
<ellipse cx="601" cy="224" rx="8" ry="3"/>
<ellipse cx="549" cy="192" rx="7" ry="4"/>
<ellipse cx="576" cy="222" rx="5" ry="5"/>
<ellipse cx="507" cy="189" rx="9" ry="6"/>
<ellipse cx="563" cy="162" rx="10" ry="4"/>
<ellipse cx="510" cy="215" rx="6" ry="4"/>
<ellipse cx="626" cy="225" rx="6" ry="4"/>
</g>
<g stroke="#e3a3e6" stroke-width="1" fill="none" opacity="0.7">
<path d="M353.0,0.0 391.0,25.0 431.0,40.0 471.0,65.0 491.0,100.0 521.0,130.0 561.0,140.0 636.0,130.0"/>
<path d="M421.0,0.0 446.0,40.0 486.0,72.0 501.0,105.0 541.0,130.0 591.0,140.0"/>
<path d="M491.0,0.0 511.0,40.0 486.0,72.0 461.0,100.0 441.0,140.0"/>
<path d="M571.0,10.0 541.0,60.0 496.0,100.0 471.0,140.0"/>
<path d="M391.0,15.0 451.0,20.0 531.0,25.0 636.0,40.0"/>
<path d="M486.0,72.0 551.0,80.0 636.0,70.0"/>
<path d="M501.0,105.0 561.0,100.0 621.0,105.0"/>
<path d="M211.0,0.0 251.0,15.0 296.0,8.0 316.0,20.0 353.0,30.0 391.0,25.0"/>
<path d="M186.0,20.0 231.0,25.0 281.0,15.0"/>
<path d="M251.0,108.0 291.0,100.0 331.0,95.0 391.0,80.0 431.0,70.0"/>
<path d="M191.0,120.0 241.0,130.0 291.0,140.0 341.0,150.0 391.0,170.0"/>
<path d="M461.0,230.0 491.0,240.0 541.0,245.0 561.0,270.0 591.0,300.0"/>
<path d="M471.0,210.0 511.0,220.0 551.0,220.0"/>
<path d="M91.0,290.0 131.0,300.0 171.0,285.0 221.0,300.0 261.0,295.0"/>
<path d="M101.0,325.0 121.0,300.0 151.0,315.0 191.0,310.0"/>
<path d="M191.0,90.0 221.0,120.0 211.0,160.0"/>
<path d="M331.0,40.0 336.0,90.0 341.0,140.0 381.0,200.0"/>
<path d="M443.3,19.8 429.2,13.3 420.7,10.9 412.5,8.6 403.7,6.8"/>
<path d="M376.9,52.1 377.2,41.0 381.0,20.1 384.7,7.0 391.2,1.3"/>
<path d="M595.7,36.2 606.8,41.5 613.9,49.2 624.1,62.8 635.3,73.7"/>
<path d="M368.9,9.0 369.7,23.0 374.3,38.5 378.4,50.0 378.1,67.8"/>
<path d="M420.6,69.8 405.6,59.4 385.2,51.9 371.4,53.4 361.5,51.3"/>
<path d="M490.4,6.6 487.2,-9.1 490.3,-21.1 497.9,-35.5 505.8,-47.5"/>
<path d="M590.4,113.5 581.5,113.2 565.1,108.6 552.5,93.7 541.5,86.0"/>
<path d="M541.6,4.7 533.8,10.4 526.5,27.7 527.0,39.1 530.5,59.0"/>
<path d="M374.0,55.0 360.0,41.5 355.7,30.4 349.9,18.7 349.7,-2.7"/>
<path d="M394.0,22.8 400.2,36.2 404.0,47.3 415.0,55.6 429.1,63.2"/>
<path d="M622.6,83.5 605.7,79.4 586.0,85.4 565.7,84.7 553.3,79.5"/>
<path d="M464.7,14.2 456.2,11.4 445.9,11.8 437.4,13.7 430.6,21.2"/>
<path d="M379.9,44.9 393.5,54.4 404.9,56.6 418.0,56.6 435.9,48.0"/>
<path d="M634.0,57.0 626.3,62.3 618.0,70.6 608.5,74.6 596.4,92.1"/>
<path d="M501.6,19.3 486.8,23.8 467.5,18.3 457.3,12.6 447.6,9.1"/>
<path d="M571.0,64.8 570.7,53.7 578.2,33.3 591.7,19.4 608.4,12.0"/>
<path d="M415.6,63.1 414.8,71.4 416.8,82.9 415.4,104.2 415.4,125.4"/>
<path d="M632.6,114.7 628.4,125.1 628.2,135.9 624.7,156.2 616.7,168.6"/>
<path d="M537.1,96.4 552.6,110.1 561.6,126.3 566.9,135.3 569.3,147.8"/>
<path d="M579.2,116.7 564.0,131.5 554.9,136.5 549.1,144.8 531.8,153.4"/>
<path d="M392.7,99.5 405.5,100.3 415.3,101.5 434.6,91.9 449.4,87.6"/>
<path d="M617.1,53.2 627.1,48.8 636.2,40.8 644.6,26.9 648.1,13.5"/>
<path d="M388.4,109.4 379.2,122.7 366.9,129.2 351.9,128.9 336.6,128.1"/>
<path d="M356.3,53.9 372.6,64.0 387.1,66.4 401.4,73.0 416.3,76.4"/>
<path d="M509.3,94.5 517.8,102.3 534.6,110.8 548.6,118.1 563.2,132.9"/>
<path d="M477.3,74.3 459.6,73.4 444.2,73.6 423.0,74.3 403.2,70.2"/>
<path d="M619.5,32.6 607.3,17.1 598.6,12.7 590.3,9.2 581.3,8.4"/>
<path d="M541.8,94.5 550.5,78.7 557.0,71.1 576.7,62.4 592.3,47.9"/>
<path d="M464.5,59.5 474.2,62.8 488.9,66.6 499.7,67.2 517.5,64.3"/>
<path d="M356.6,67.4 349.2,77.7 338.7,88.6 333.5,109.8 321.5,127.7"/>
<path d="M380.9,33.3 390.7,39.8 404.5,41.8 420.2,53.3 429.7,56.7"/>
<path d="M613.0,69.3 606.6,63.2 599.0,51.6 580.2,41.9 564.7,30.4"/>
<path d="M374.9,103.0 384.3,113.9 396.7,123.5 401.3,134.3 412.8,144.6"/>
<path d="M419.0,14.9 428.6,19.9 440.5,22.9 450.7,29.3 459.6,34.9"/>
<path d="M449.9,4.1 459.9,19.4 465.2,28.7 476.2,46.7 492.8,56.8"/>
<path d="M474.2,60.4 480.1,46.5 492.8,28.9 501.1,11.1 511.8,-2.0"/>
<path d="M466.3,43.0 475.3,42.1 486.7,44.2 495.6,42.3 515.4,46.1"/>
<path d="M542.1,35.3 546.3,49.1 555.6,59.9 573.6,71.6 580.1,85.9"/>
<path d="M420.7,115.9 419.1,123.8 418.2,138.4 417.5,149.2 417.0,157.3"/>
<path d="M426.3,12.6 423.1,20.3 421.4,31.4 417.5,46.3 408.4,60.9"/>
<path d="M555.1,105.7 541.6,122.9 537.2,140.4 533.7,148.3 518.7,162.3"/>
<path d="M529.8,88.6 529.1,73.3 528.3,53.6 534.6,35.1 543.1,16.4"/>
<path d="M545.6,83.8 551.9,91.4 559.1,97.6 566.0,111.8 570.9,127.9"/>
<path d="M545.0,59.7 562.2,66.6 576.5,72.3 584.0,77.2 591.6,85.9"/>
<path d="M372.2,33.3 363.6,17.1 364.9,2.2 364.1,-12.4 367.2,-30.9"/>
<path d="M526.8,77.8 538.4,78.6 549.9,82.8 557.3,86.3 569.0,85.2"/>
<path d="M542.5,83.7 532.5,72.2 522.4,61.7 503.2,54.7 481.5,54.9"/>
<path d="M617.8,4.1 596.4,1.4 584.7,0.6 564.3,6.6 551.3,16.1"/>
<path d="M391.4,63.8 405.8,50.7 421.0,37.1 430.9,31.8 445.7,31.7"/>
<path d="M358.1,2.4 345.9,3.8 335.0,10.4 320.7,24.1 316.9,42.2"/>
<path d="M590.1,16.2 610.3,11.9 622.1,6.0 640.4,-6.3 652.0,-12.3"/>
<path d="M473.0,34.5 492.4,31.0 511.5,22.2 520.3,14.4 528.3,7.3"/>
<path d="M457.4,114.8 473.2,109.0 494.1,111.9 511.9,115.5 529.1,109.4"/>
<path d="M479.5,90.8 472.6,85.6 468.7,76.6 463.2,65.0 451.6,50.8"/>
<path d="M629.2,32.7 617.6,22.1 609.1,16.1 598.4,13.9 586.9,4.3"/>
<path d="M413.7,108.9 423.6,108.1 432.0,104.0 439.4,98.5 446.1,89.0"/>
<path d="M513.3,106.7 511.8,93.0 510.8,79.8 508.4,71.2 497.3,52.7"/>
<path d="M386.9,61.4 383.4,50.9 376.9,41.5 367.5,30.7 364.1,11.1"/>
<path d="M599.8,4.6 618.2,13.6 633.0,20.2 646.3,17.8 664.8,24.3"/>
<path d="M594.8,116.7 599.5,125.7 607.2,141.5 605.8,159.6 601.1,177.7"/>
<path d="M481.3,67.1 490.7,73.3 498.6,88.4 505.0,95.8 519.3,104.8"/>
<path d="M550.1,15.2 564.5,22.6 575.0,26.2 582.3,29.8 596.4,33.0"/>
<path d="M624.3,78.1 632.5,70.3 642.8,51.5 651.2,42.5 653.8,27.7"/>
<path d="M543.2,51.6 538.1,71.9 538.8,80.3 542.6,93.7 543.2,104.4"/>
<path d="M578.2,89.2 557.7,96.1 541.1,106.3 534.0,114.8 523.7,121.3"/>
<path d="M622.3,60.5 631.5,70.8 642.2,89.2 653.2,97.1 674.1,102.9"/>
<path d="M391.4,8.1 411.4,13.2 425.2,25.1 430.7,45.4 435.5,54.9"/>
<path d="M617.7,90.1 630.0,95.2 642.3,98.3 650.2,97.1 662.0,91.9"/>
<path d="M623.3,16.6 634.2,9.5 653.3,5.8 661.7,3.4 674.3,-0.6"/>
<path d="M613.1,24.8 605.2,27.9 588.1,36.9 579.6,38.3 573.0,44.2"/>
<path d="M613.2,32.3 618.9,20.9 622.8,-0.1 626.6,-11.2 633.4,-21.6"/>
<path d="M429.6,2.4 438.1,-12.1 445.4,-16.1 455.4,-26.9 475.9,-32.7"/>
<path d="M461.2,31.6 442.2,40.7 429.3,54.9 412.6,65.0 396.4,68.6"/>
<path d="M444.4,39.7 436.6,44.3 425.0,58.8 421.7,67.1 424.6,82.5"/>
<path d="M443.8,117.7 455.4,115.9 462.9,110.3 477.1,99.4 485.7,92.0"/>
<path d="M469.8,75.2 466.2,55.7 466.4,46.0 471.4,34.9 477.8,23.4"/>
<path d="M561.3,25.5 564.6,35.1 562.3,51.1 563.3,64.6 555.8,77.7"/>
<path d="M416.9,97.4 416.8,88.0 415.8,68.5 423.1,49.0 420.7,37.2"/>
<path d="M385.0,24.4 405.9,22.8 425.6,18.3 436.7,15.0 457.9,16.0"/>
<path d="M381.1,72.3 369.1,67.1 358.2,67.3 342.6,72.3 331.9,73.7"/>
<path d="M354.2,40.6 345.1,32.3 327.4,25.1 319.3,21.3 305.8,21.8"/>
<path d="M507.8,77.4 525.3,80.4 537.2,81.1 558.3,77.5 573.0,71.4"/>
<path d="M452.8,51.1 465.5,47.8 480.2,37.2 484.7,30.5 497.0,23.8"/>
<path d="M584.8,49.9 592.1,42.7 595.2,27.3 602.8,7.9 600.7,-8.6"/>
<path d="M456.7,61.5 468.8,70.9 472.6,79.6 480.3,97.2 478.8,107.9"/>
<path d="M387.1,113.3 395.7,111.7 408.4,116.1 419.8,128.3 423.4,137.9"/>
<path d="M575.0,28.2 555.7,31.8 546.4,37.8 534.6,47.4 528.0,54.6"/>
<path d="M421.4,87.5 427.2,72.7 432.6,66.1 441.1,61.6 455.8,56.0"/>
<path d="M529.7,38.1 516.9,43.6 502.9,46.7 495.0,49.0 480.3,51.2"/>
<path d="M418.0,92.1 419.5,81.7 420.5,72.2 415.7,59.0 405.3,49.5"/>
<path d="M496.4,6.8 479.3,0.5 467.5,-9.1 452.7,-11.4 431.3,-11.5"/>
<path d="M389.8,103.1 408.6,108.0 430.2,105.4 451.4,102.7 461.0,106.5"/>
<path d="M575.7,111.8 593.8,116.1 614.0,112.5 631.5,104.1 641.2,92.5"/>
<path d="M613.2,26.6 612.1,39.0 616.9,48.4 633.1,61.9 645.6,78.2"/>
<path d="M399.1,94.6 411.4,106.3 428.1,117.5 440.9,127.4 445.1,135.9"/>
<path d="M634.0,76.3 622.8,79.9 607.4,75.4 588.8,73.3 578.3,72.9"/>
<path d="M562.9,7.7 565.3,-9.1 576.0,-21.3 585.8,-28.8 588.5,-36.8"/>
<path d="M393.6,74.7 374.7,82.9 367.4,91.3 360.9,96.5 357.0,108.9"/>
<path d="M381.3,44.1 382.3,60.4 389.1,75.7 393.4,84.6 392.5,96.0"/>
<path d="M393.6,13.3 388.7,-5.0 384.4,-15.9 370.4,-25.6 360.4,-33.8"/>
<path d="M260 15L282 21"/>
<path d="M215 29L192 30"/>
<path d="M233 9L211 16"/>
<path d="M187 19L209 10"/>
<path d="M209 20L209 24"/>
<path d="M280 7L270 2"/>
<path d="M192 29L206 34"/>
<path d="M187 27L199 26"/>
<path d="M271 16L258 6"/>
<path d="M213 3L204 9"/>
<path d="M266 27L277 22"/>
<path d="M250 15L264 16"/>
<path d="M217 21L240 14"/>
<path d="M287 2L275 -4"/>
<path d="M272 30L284 26"/>
<path d="M287 12L274 22"/>
<path d="M259 23L267 34"/>
<path d="M240 27L250 36"/>
<path d="M236 24L240 19"/>
<path d="M210 21L189 31"/>
<path d="M203 3L183 13"/>
<path d="M226 6L202 -5"/>
<path d="M266 21L276 27"/>
<path d="M194 20L187 27"/>
<path d="M280 29L259 38"/>
<path d="M291 30L272 23"/>
<path d="M199 3L216 11"/>
<path d="M259 27L266 22"/>
<path d="M197 5L210 -2"/>
<path d="M223 15L199 9"/>
<path d="M218 23L212 19"/>
<path d="M297 17L314 20"/>
<path d="M190 14L186 21"/>
<path d="M226 23L228 16"/>
<path d="M285 5L301 -3"/>
<path d="M186 8L199 20"/>
<path d="M187 17L186 24"/>
<path d="M207 17L200 25"/>
<path d="M216 30L205 23"/>
<path d="M266 17L247 20"/>
<path d="M484 299L494 310" opacity="0.5"/>
<path d="M575 256L570 251" opacity="0.5"/>
<path d="M618 229L637 210" opacity="0.5"/>
<path d="M505 246L525 246" opacity="0.5"/>
<path d="M534 308L520 307" opacity="0.5"/>
<path d="M559 295L571 301" opacity="0.5"/>
<path d="M529 253L511 266" opacity="0.5"/>
<path d="M580 294L564 292" opacity="0.5"/>
<path d="M599 278L580 276" opacity="0.5"/>
<path d="M617 244L602 236" opacity="0.5"/>
<path d="M587 304L570 291" opacity="0.5"/>
<path d="M512 253L513 239" opacity="0.5"/>
<path d="M525 239L549 248" opacity="0.5"/>
<path d="M488 316L468 312" opacity="0.5"/>
<path d="M633 299L645 297" opacity="0.5"/>
<path d="M503 284L484 272" opacity="0.5"/>
<path d="M535 223L530 235" opacity="0.5"/>
<path d="M585 270L592 269" opacity="0.5"/>
<path d="M494 280L490 290" opacity="0.5"/>
<path d="M621 263L625 273" opacity="0.5"/>
<path d="M540 243L552 258" opacity="0.5"/>
<path d="M599 290L616 297" opacity="0.5"/>
<path d="M577 265L568 271" opacity="0.5"/>
<path d="M487 262L501 270" opacity="0.5"/>
<path d="M575 245L571 243" opacity="0.5"/>
</g>
<g stroke="#d9d4e6" stroke-width="1" fill="none" opacity="0.8">
<path d="M312 170L326 196"/>
<path d="M219 224L242 217"/>
<path d="M284 294L247 297"/>
<path d="M215 252L250 253"/>
<path d="M202 206L206 219"/>
<path d="M289 221L315 222"/>
<path d="M267 289L244 300"/>
<path d="M263 248L233 277"/>
<path d="M256 92L238 86"/>
<path d="M184 172L177 184"/>
<path d="M255 138L233 153"/>
<path d="M378 196L356 214"/>
<path d="M263 127L234 143"/>
<path d="M351 220L349 223"/>
<path d="M228 292L217 300"/>
<path d="M353 260L350 247"/>
<path d="M296 108L323 99"/>
<path d="M360 139L350 124"/>
<path d="M270 121L231 134"/>
<path d="M240 134L224 133"/>
<path d="M271 220L284 212"/>
<path d="M376 268L341 288"/>
<path d="M371 252L342 272"/>
<path d="M314 83L275 110"/>
<path d="M319 135L287 114"/>
<path d="M230 251L218 230"/>
<path d="M371 254L344 278"/>
<path d="M309 252L322 276"/>
<path d="M346 265L322 276"/>
<path d="M292 243L288 266"/>
</g>
<path d="M0.0,0.0 50.0,0.0 57.0,8.0 66.0,6.0 73.0,4.0 82.0,0.0 185.0,0.0 189.0,2.0 195.6,7.4 204.0,9.5 210.0,7.4 216.4,4.2 213.3,8.4 209.0,14.7 198.7,19.0 185.0,19.0 175.8,26.0 169.0,36.0 162.0,45.0 150.8,58.4 162.0,60.5 177.9,50.0 193.5,52.0 198.7,43.8 214.3,34.5 235.0,35.5 261.0,31.3 281.0,33.0 287.0,32.4 301.2,26.3 311.3,12.8 304.0,11.5 299.8,4.2 297.7,0.0 381.0,0.0 381.0,8.0 368.6,11.5 355.0,14.8 340.3,21.6 321.4,27.6 317.4,33.0 316.0,45.0 313.6,50.0 307.0,62.0 291.9,71.0 276.6,81.7 273.4,88.0 261.0,88.0 250.7,83.3 241.0,76.0 236.5,73.0 237.0,80.0 241.2,92.0 241.2,105.4 235.0,103.8 214.4,108.5 198.6,103.8 183.0,110.0 171.9,114.8 170.3,119.5 179.7,124.3 176.6,130.6 180.8,136.3 197.0,141.5 207.5,149.4 216.7,156.5 229.7,161.7 233.0,169.6 236.2,176.0 239.0,200.0 245.0,228.0 252.0,251.0 249.8,283.8 224.0,276.7 186.0,274.8 148.0,276.7 110.0,274.8 91.0,276.7 83.5,284.3 77.8,292.0 75.9,307.0 72.0,325.0 0.0,325.0Z" fill="#abc6f0"/>
<path d="M348.5,325.0 348.5,322.5 353.5,290.0 371.0,283.8 391.0,282.5 406.0,291.3 423.5,290.0 436.0,283.8 451.0,272.5 459.8,267.5 466.0,260.0 484.0,251.7 503.6,256.6 513.4,271.3 520.0,286.0 528.0,304.0 536.0,325.0Z" fill="#abc6f0"/>
<path d="M481.0,325.0 487.0,313.0 495.5,308.8 503.0,314.0 511.7,325.0Z" fill="#f3f1ec"/>
<path d="M557.0,235.0 559.0,224.0 568.8,206.0 585.0,207.7 591.6,217.5 601.4,233.8 606.3,222.4 617.7,227.3 636.0,252.0 636.0,325.0 621.0,325.0 617.7,320.0 609.5,304.0 601.4,290.8 588.4,277.8 572.0,264.8 562.3,250.0Z" fill="#abc6f0"/>
<g fill="#cfdcae" opacity="0.8">
<ellipse cx="193" cy="18" rx="8" ry="3"/>
<ellipse cx="189" cy="43" rx="5" ry="5"/>
<ellipse cx="251" cy="28" rx="6" ry="4"/>
<ellipse cx="261" cy="23" rx="7" ry="4"/>
<ellipse cx="291" cy="28" rx="6" ry="3"/>
</g>
<g font-family="Liberation Sans" fill="#8a8a8a" opacity="0.9">
<text x="454" y="20" font-size="24" letter-spacing="1.5">GERMANY</text>
<text x="578" y="84" font-size="15" letter-spacing="1">CZECH R</text>
<text x="574" y="164" font-size="18" letter-spacing="1">AUSTRIA</text>
<text x="426" y="181" font-size="13" letter-spacing="0.3">SWITZERLAND</text>
<text x="590" y="196" font-size="11.5">SLOVENIA</text>
<text x="531" y="303" font-size="24" letter-spacing="2">ITALY</text>
<text x="368" y="50" font-size="14" letter-spacing="1" opacity="0.7">BELGIUM</text>
<text x="396" y="72" font-size="9" opacity="0.35">LUXEMBOURG</text>
<text x="290" y="189" font-size="27" letter-spacing="4" opacity="0.6">FRANCE</text>
</g>
<g font-family="Liberation Sans" fill="#474747" stroke="#f6f4f0" stroke-width="2" paint-order="stroke">
<text x="374" y="13" font-size="12">Düsseldorf</text>
<text x="384" y="27" font-size="10">Brussels</text>
<text x="444" y="41" font-size="12">Cologne</text>
<text x="485" y="71" font-size="12">Frankfurt</text>
<text x="496" y="99" font-size="12">Stuttgart</text>
<text x="551" y="122" font-size="12.5">Munich</text>
<text x="616" y="55" font-size="12">Prag</text>
<text x="614" y="119" font-size="12">Vier</text>
<text x="622" y="15" font-size="12">Wr</text>
<text x="316" y="11" font-size="9.5">Middelburg</text>
<text x="479" y="148" font-size="11">Zurich</text>
<text x="503" y="164" font-size="10">Vaduz</text>
<text x="494" y="212" font-size="14">Milan</text>
<text x="459" y="224" font-size="14">Turin</text>
<text x="490" y="246" font-size="14">Genoa</text>
<text x="548" y="212" font-size="11">Venice</text>
<text x="544" y="242" font-size="11">Bologna</text>
<text x="601" y="222" font-size="11">Trieste</text>
<text x="570" y="261" font-size="9.5">San Marino</text>
<text x="453" y="282" font-size="9.5">Monaco-Ville</text>
<text x="572" y="324" font-size="13">Rome</text>
<text x="318" y="308" font-size="10">Andorra la Vella</text>
<text x="352" y="280" font-size="14">Marseille</text>
<text x="293" y="272" font-size="11.5">Toulouse</text>
<text x="222" y="295" font-size="11">Vitoria</text>
<text x="144" y="277" font-size="11">Santander</text>
<text x="37" y="281" font-size="11">La Coruña</text>
<text x="104" y="312" font-size="11">Orense</text>
<text x="160" y="312" font-size="11">Burgos</text>
<text x="57" y="316" font-size="11">Vigo</text>
<text x="188" y="43" font-size="11">Plymouth</text>
<text x="247" y="86" font-size="12">Caen</text>
<text x="296" y="61" font-size="12">Amiens</text>
<text x="245" y="124" font-size="12">Rennes</text>
<text x="209" y="154" font-size="12">Nantes</text>
<text x="328" y="129" font-size="12">Orleans</text>
<text x="369" y="150" font-size="12">Dijon</text>
<text x="423" y="154" font-size="11">Besançon</text>
<text x="291" y="94" font-size="12">Rouen</text>
<text x="330" y="34" font-size="11">Lille</text>
<text x="232" y="5" font-size="13">London</text>
<text x="161" y="5" font-size="11">Caerdydd</text>
<text x="89" y="5" font-size="11">Cork</text>
<text x="484" y="326" font-size="10">Ajaccio</text>
</g>
<text x="148" y="83" font-family="Liberation Sans" font-style="italic" font-size="11" fill="#5f7fb5">English Channel</text>
<text x="143" y="253" font-family="Liberation Sans" font-style="italic" font-size="11" fill="#5f7fb5">Bay of Biscay</text>
<text x="615" y="302" font-family="Liberation Sans" font-style="italic" font-size="12" fill="#5f7fb5">Adriatic</text>
<g fill="#e9986a">
<rect x="361.5" y="9.5" width="3" height="3"/>
<rect x="401.5" y="20.5" width="3" height="3"/>
<rect x="434.5" y="26.5" width="3" height="3"/>
<rect x="459.5" y="36.5" width="3" height="3"/>
<rect x="494.5" y="85.5" width="3" height="3"/>
<rect x="541.5" y="119.5" width="3" height="3"/>
<rect x="612.5" y="51.5" width="3" height="3"/>
<rect x="448.5" y="246.5" width="3" height="3"/>
<rect x="482.5" y="250.5" width="3" height="3"/>
<rect x="541.5" y="238.5" width="3" height="3"/>
<rect x="555.5" y="211.5" width="3" height="3"/>
<rect x="586.5" y="208.5" width="3" height="3"/>
<rect x="575.5" y="262.5" width="3" height="3"/>
<rect x="467.5" y="267.5" width="3" height="3"/>
<rect x="483.5" y="221.5" width="3" height="3"/>
<rect x="133.5" y="33.5" width="3" height="3"/>
<rect x="220.5" y="11.5" width="3" height="3"/>
<rect x="267.5" y="93.5" width="3" height="3"/>
<rect x="333.5" y="47.5" width="3" height="3"/>
</g>
<g fill="#c22626" fill-opacity="0.64" stroke="#951010" stroke-width="1.1">
<circle cx="329.9" cy="25.2" r="5"/>
<circle cx="334.8" cy="24.7" r="5"/>
<circle cx="318.0" cy="37.2" r="5"/>
<circle cx="317.4" cy="41.5" r="5"/>
<circle cx="337.5" cy="35.0" r="5"/>
<circle cx="341.9" cy="39.3" r="5"/>
<circle cx="352.7" cy="35.5" r="5"/>
<circle cx="350.6" cy="40.4" r="5"/>
<circle cx="344.0" cy="44.8" r="5"/>
<circle cx="346.2" cy="51.3" r="5"/>
<circle cx="353.8" cy="53.5" r="5"/>
<circle cx="360.3" cy="48.0" r="5"/>
<circle cx="368.5" cy="54.0" r="5"/>
<circle cx="312.0" cy="59.5" r="5"/>
<circle cx="333.2" cy="64.3" r="5"/>
<circle cx="334.3" cy="66.5" r="5"/>
<circle cx="345.7" cy="66.5" r="5"/>
<circle cx="339.7" cy="74.1" r="5"/>
<circle cx="359.3" cy="66.5" r="5"/>
<circle cx="358.2" cy="72.0" r="5"/>
<circle cx="354.9" cy="75.2" r="5"/>
<circle cx="363.6" cy="76.8" r="5"/>
<circle cx="376.7" cy="76.8" r="5"/>
<circle cx="246.8" cy="79.0" r="5"/>
<circle cx="283.2" cy="79.0" r="5"/>
<circle cx="282.1" cy="85.0" r="5"/>
<circle cx="297.3" cy="75.2" r="5"/>
<circle cx="295.1" cy="78.5" r="5"/>
<circle cx="306.0" cy="81.7" r="5"/>
<circle cx="310.9" cy="79.0" r="5"/>
<circle cx="307.6" cy="88.3" r="5"/>
<circle cx="324.5" cy="81.2" r="5"/>
<circle cx="335.3" cy="85.0" r="5"/>
<circle cx="345.1" cy="83.9" r="5"/>
<circle cx="351.7" cy="88.3" r="5"/>
<circle cx="357.1" cy="86.1" r="5"/>
<circle cx="365.8" cy="87.2" r="5"/>
<circle cx="372.3" cy="87.2" r="5"/>
<circle cx="336.4" cy="88.3" r="5"/>
<circle cx="278.8" cy="94.2" r="5"/>
<circle cx="286.4" cy="92.6" r="5"/>
<circle cx="296.2" cy="93.2" r="5"/>
<circle cx="307.1" cy="95.9" r="5"/>
<circle cx="318.0" cy="95.9" r="5"/>
<circle cx="327.7" cy="93.7" r="5"/>
<circle cx="335.3" cy="95.9" r="5"/>
<circle cx="340.8" cy="100.2" r="5"/>
<circle cx="348.4" cy="97.0" r="5"/>
<circle cx="358.2" cy="97.0" r="5"/>
<circle cx="378.8" cy="99.1" r="5"/>
<circle cx="311.4" cy="105.7" r="5"/>
<circle cx="318.0" cy="103.5" r="5"/>
<circle cx="328.8" cy="103.5" r="5"/>
<circle cx="337.5" cy="104.6" r="5"/>
<circle cx="346.2" cy="105.7" r="5"/>
<circle cx="237.5" cy="106.7" r="5"/>
<circle cx="322.0" cy="108.7" r="5"/>
<circle cx="336.2" cy="106.5" r="5"/>
<circle cx="341.7" cy="103.3" r="5"/>
<circle cx="327.5" cy="115.2" r="5"/>
<circle cx="335.1" cy="121.7" r="5"/>
<circle cx="342.7" cy="121.7" r="5"/>
<circle cx="347.1" cy="117.4" r="5"/>
<circle cx="349.3" cy="112.0" r="5"/>
<circle cx="355.8" cy="112.0" r="5"/>
<circle cx="361.2" cy="114.1" r="5"/>
<circle cx="356.9" cy="100.0" r="5"/>
<circle cx="380.8" cy="101.0" r="5"/>
<circle cx="392.7" cy="100.0" r="5"/>
<circle cx="282.4" cy="116.8" r="5"/>
<circle cx="306.9" cy="117.4" r="5"/>
<circle cx="288.4" cy="129.3" r="5"/>
<circle cx="284.0" cy="131.5" r="5"/>
<circle cx="311.2" cy="128.8" r="5"/>
<circle cx="319.9" cy="129.9" r="5"/>
<circle cx="324.3" cy="134.8" r="5"/>
<circle cx="305.8" cy="139.1" r="5"/>
<circle cx="309.0" cy="139.1" r="5"/>
<circle cx="361.2" cy="133.2" r="5"/>
<circle cx="371.0" cy="135.9" r="5"/>
<circle cx="376.4" cy="139.1" r="5"/>
<circle cx="373.2" cy="146.7" r="5"/>
<circle cx="393.3" cy="129.9" r="5"/>
<circle cx="405.2" cy="138.0" r="5"/>
<circle cx="412.3" cy="140.2" r="5"/>
<circle cx="411.2" cy="119.0" r="5"/>
<circle cx="406.9" cy="104.3" r="5"/>
<circle cx="415.6" cy="106.5" r="5"/>
<circle cx="418.8" cy="120.7" r="5"/>
<circle cx="274.3" cy="154.3" r="5"/>
<circle cx="298.2" cy="152.2" r="5"/>
<circle cx="293.8" cy="164.1" r="5"/>
<circle cx="316.7" cy="158.2" r="5"/>
<circle cx="328.0" cy="158.2" r="5"/>
<circle cx="339.5" cy="158.2" r="5"/>
<circle cx="352.5" cy="165.2" r="5"/>
<circle cx="352.5" cy="170.7" r="5"/>
<circle cx="396.0" cy="154.3" r="5"/>
<circle cx="393.8" cy="160.9" r="5"/>
<circle cx="390.6" cy="167.4" r="5"/>
<circle cx="391.7" cy="172.8" r="5"/>
<circle cx="406.9" cy="160.9" r="5"/>
<circle cx="413.4" cy="166.3" r="5"/>
<circle cx="417.7" cy="156.5" r="5"/>
<circle cx="394.9" cy="184.8" r="5"/>
<circle cx="401.4" cy="191.3" r="5"/>
<circle cx="414.5" cy="193.5" r="5"/>
<circle cx="381.9" cy="16.3" r="5"/>
<circle cx="405.3" cy="39.8" r="5"/>
<circle cx="363.0" cy="48.3" r="5"/>
<circle cx="388.4" cy="63.9" r="5"/>
<circle cx="390.3" cy="71.1" r="5"/>
<circle cx="361.7" cy="67.8" r="5"/>
<circle cx="383.8" cy="78.3" r="5"/>
<circle cx="399.5" cy="79.6" r="5"/>
<circle cx="403.4" cy="78.3" r="5"/>
<circle cx="420.3" cy="68.5" r="5"/>
<circle cx="421.0" cy="75.6" r="5"/>
<circle cx="415.1" cy="84.1" r="5"/>
<circle cx="422.3" cy="83.5" r="5"/>
<circle cx="421.7" cy="91.3" r="5"/>
<circle cx="434.0" cy="91.3" r="5"/>
<circle cx="438.6" cy="90.0" r="5"/>
<circle cx="400.1" cy="92.0" r="5"/>
<circle cx="393.6" cy="96.5" r="5"/>
<circle cx="381.2" cy="99.1" r="5"/>
<circle cx="419.7" cy="100.4" r="5"/>
<circle cx="415.8" cy="108.3" r="5"/>
<circle cx="428.8" cy="110.9" r="5"/>
<circle cx="440.6" cy="107.0" r="5"/>
<circle cx="445.8" cy="107.0" r="5"/>
<circle cx="456.2" cy="105.7" r="5"/>
<circle cx="457.5" cy="110.9" r="5"/>
<circle cx="434.0" cy="116.1" r="5"/>
<circle cx="452.3" cy="118.0" r="5"/>
<circle cx="410.6" cy="116.1" r="5"/>
<circle cx="363.0" cy="113.5" r="5"/>
<circle cx="361.7" cy="95.2" r="5"/>
<circle cx="421.4" cy="121.1" r="5"/>
<circle cx="428.6" cy="125.0" r="5"/>
<circle cx="439.7" cy="121.7" r="5"/>
<circle cx="451.4" cy="122.4" r="5"/>
<circle cx="449.5" cy="128.9" r="5"/>
<circle cx="442.3" cy="137.4" r="5"/>
<circle cx="448.8" cy="140.0" r="5"/>
<circle cx="437.1" cy="146.5" r="5"/>
<circle cx="437.1" cy="149.1" r="5"/>
<circle cx="394.0" cy="159.6" r="5"/>
<circle cx="390.1" cy="166.1" r="5"/>
<circle cx="391.4" cy="171.3" r="5"/>
<circle cx="421.4" cy="160.2" r="5"/>
<circle cx="426.0" cy="168.0" r="5"/>
<circle cx="424.7" cy="188.3" r="5"/>
<circle cx="429.9" cy="196.7" r="5"/>
<circle cx="438.4" cy="201.3" r="5"/>
<circle cx="448.8" cy="192.8" r="5"/>
<circle cx="414.9" cy="195.4" r="5"/>
<circle cx="395.3" cy="190.9" r="5"/>
<circle cx="400.6" cy="201.3" r="5"/>
<circle cx="411.0" cy="203.3" r="5"/>
<circle cx="417.5" cy="203.9" r="5"/>
<circle cx="426.7" cy="209.1" r="5"/>
<circle cx="437.1" cy="213.0" r="5"/>
<circle cx="407.1" cy="213.0" r="5"/>
<circle cx="417.5" cy="213.0" r="5"/>
<circle cx="396.7" cy="209.1" r="5"/>
<circle cx="425.3" cy="223.5" r="5"/>
<circle cx="433.2" cy="224.8" r="5"/>
<circle cx="411.0" cy="224.8" r="5"/>
<circle cx="400.6" cy="224.1" r="5"/>
<circle cx="484.0" cy="217.0" r="5"/>
<circle cx="396.0" cy="212.5" r="5"/>
<circle cx="416.0" cy="213.8" r="5"/>
<circle cx="428.5" cy="213.8" r="5"/>
<circle cx="402.2" cy="225.0" r="5"/>
<circle cx="396.0" cy="230.0" r="5"/>
<circle cx="371.0" cy="253.8" r="5"/>
<circle cx="382.2" cy="252.5" r="5"/>
<circle cx="388.5" cy="255.0" r="5"/>
<circle cx="377.2" cy="265.0" r="5"/>
<circle cx="387.2" cy="266.2" r="5"/>
<circle cx="397.2" cy="267.5" r="5"/>
<circle cx="402.2" cy="271.2" r="5"/>
<circle cx="408.5" cy="275.0" r="5"/>
<circle cx="378.5" cy="272.5" r="5"/>
<circle cx="369.8" cy="275.0" r="5"/>
<circle cx="364.8" cy="282.5" r="5"/>
<circle cx="354.8" cy="285.0" r="5"/>
<circle cx="348.5" cy="290.0" r="5"/>
<circle cx="351.0" cy="295.0" r="5"/>
<circle cx="392.2" cy="275.0" r="5"/>
<circle cx="396.0" cy="280.0" r="5"/>
<circle cx="403.5" cy="283.8" r="5"/>
<circle cx="406.0" cy="286.2" r="5"/>
<circle cx="416.0" cy="291.2" r="5"/>
<circle cx="419.8" cy="288.8" r="5"/>
<circle cx="412.2" cy="283.8" r="5"/>
<circle cx="454.8" cy="261.2" r="5"/>
<circle cx="447.9" cy="273.1" r="5"/>
<circle cx="439.8" cy="278.8" r="5"/>
<circle cx="438.5" cy="283.1" r="5"/>
<circle cx="347.2" cy="306.2" r="5"/>
<circle cx="352.9" cy="313.8" r="5"/>
<circle cx="292.9" cy="256.9" r="5"/>
<circle cx="289.1" cy="262.5" r="5"/>
<circle cx="256.0" cy="272.5" r="5"/>
<circle cx="259.1" cy="279.4" r="5"/>
<circle cx="245.4" cy="279.4" r="5"/>
<circle cx="247.9" cy="280.6" r="5"/>
<circle cx="239.1" cy="285.0" r="5"/>
<circle cx="299.1" cy="273.8" r="5"/>
<circle cx="311.6" cy="263.1" r="5"/>
<circle cx="311.0" cy="272.5" r="5"/>
<circle cx="313.5" cy="276.9" r="5"/>
<circle cx="334.8" cy="270.6" r="5"/>
<circle cx="319.8" cy="283.1" r="5"/>
<circle cx="316.0" cy="288.8" r="5"/>
<circle cx="326.0" cy="286.2" r="5"/>
<circle cx="334.8" cy="289.4" r="5"/>
<circle cx="272.2" cy="291.9" r="5"/>
<circle cx="281.6" cy="288.1" r="5"/>
<circle cx="289.1" cy="291.9" r="5"/>
<circle cx="297.2" cy="300.0" r="5"/>
<circle cx="326.6" cy="313.1" r="5"/>
<circle cx="349.8" cy="288.8" r="5"/>
<circle cx="192.3" cy="110.9" r="5"/>
<circle cx="186.0" cy="131.4" r="5"/>
<circle cx="221.5" cy="115.6" r="5"/>
<circle cx="239.6" cy="118.0" r="5"/>
<circle cx="241.2" cy="128.2" r="5"/>
<circle cx="262.5" cy="129.0" r="5"/>
<circle cx="277.5" cy="94.3" r="5"/>
<circle cx="285.4" cy="131.4" r="5"/>
<circle cx="291.7" cy="129.0" r="5"/>
<circle cx="323.2" cy="130.6" r="5"/>
<circle cx="309.0" cy="79.3" r="5"/>
<circle cx="299.6" cy="80.1" r="5"/>
<circle cx="296.4" cy="91.2" r="5"/>
<circle cx="316.9" cy="39.1" r="5"/>
<circle cx="332.7" cy="25.0" r="5"/>
<circle cx="332.7" cy="66.0" r="5"/>
<circle cx="335.8" cy="92.7" r="5"/>
<circle cx="216.3" cy="143.8" r="5"/>
<circle cx="287.8" cy="130.8" r="5"/>
<circle cx="225.1" cy="156.5" r="5"/>
<circle cx="228.4" cy="156.2" r="5"/>
<circle cx="235.6" cy="152.9" r="5"/>
<circle cx="245.4" cy="154.2" r="5"/>
<circle cx="253.2" cy="152.3" r="5"/>
<circle cx="260.4" cy="151.6" r="5"/>
<circle cx="267.5" cy="150.0" r="5"/>
<circle cx="238.2" cy="162.4" r="5"/>
<circle cx="246.0" cy="159.1" r="5"/>
<circle cx="251.9" cy="161.7" r="5"/>
<circle cx="250.3" cy="168.9" r="5"/>
<circle cx="240.1" cy="176.0" r="5"/>
<circle cx="248.0" cy="175.4" r="5"/>
<circle cx="255.1" cy="175.4" r="5"/>
<circle cx="289.1" cy="164.4" r="5"/>
<circle cx="239.5" cy="120.7" r="5"/>
<circle cx="74.0" cy="292.0" r="5"/>
<circle cx="600.3" cy="312.9" r="5"/>
<circle cx="353.2" cy="75.2" r="5"/>
<circle cx="389.0" cy="72.6" r="5"/>
<circle cx="328.4" cy="95.4" r="5"/>
<circle cx="335.6" cy="98.0" r="5"/>
<circle cx="346.7" cy="99.4" r="5"/>
<circle cx="330.4" cy="103.9" r="5"/>
<circle cx="337.5" cy="106.5" r="5"/>
<circle cx="329.0" cy="117.0" r="5"/>
<circle cx="318.6" cy="128.7" r="5"/>
<circle cx="304.3" cy="79.8" r="5"/>
<circle cx="307.5" cy="86.3" r="5"/>
<circle cx="302.3" cy="75.2" r="5"/>
<circle cx="421.9" cy="84.8" r="5"/>
<circle cx="425.8" cy="97.2" r="5"/>
<circle cx="401.7" cy="92.0" r="5"/>
<circle cx="422.5" cy="110.2" r="5"/>
<circle cx="442.7" cy="107.0" r="5"/>
<circle cx="446.7" cy="105.7" r="5"/>
<circle cx="437.5" cy="116.8" r="5"/>
<circle cx="412.1" cy="116.8" r="5"/>
<circle cx="419.3" cy="117.4" r="5"/>
<circle cx="427.1" cy="117.4" r="5"/>
<circle cx="389.5" cy="171.3" r="5"/>
<circle cx="413.0" cy="170.0" r="5"/>
<circle cx="426.0" cy="171.3" r="5"/>
<circle cx="403.2" cy="200.0" r="5"/>
<circle cx="409.7" cy="203.9" r="5"/>
<circle cx="416.2" cy="203.9" r="5"/>
<circle cx="398.0" cy="203.3" r="5"/>
<circle cx="397.3" cy="210.4" r="5"/>
<circle cx="407.1" cy="214.4" r="5"/>
<circle cx="420.8" cy="213.0" r="5"/>
<circle cx="426.7" cy="222.8" r="5"/>
<circle cx="395.4" cy="228.7" r="5"/>
<circle cx="352.3" cy="294.6" r="5"/>
<circle cx="391.4" cy="276.3" r="5"/>
<circle cx="395.4" cy="281.5" r="5"/>
<circle cx="406.4" cy="288.0" r="5"/>
<circle cx="438.4" cy="278.9" r="5"/>
<circle cx="437.1" cy="283.5" r="5"/>
<circle cx="398.0" cy="284.1" r="5"/>
</g>
<g transform="translate(11,296)" fill="#555"><path d="M0 0l3.5 1.2v11.5l6-3.2-2.8-1.3-1.5-3.7 8.7 3v4.3l-10.3 6.2-3.6-1.9z"/></g>
<text x="29" y="310" font-family="Liberation Sans" font-size="17" fill="#666">bing</text>
<g font-family="Liberation Sans" font-size="10.5" fill="#111" stroke="#f6f4f0" stroke-width="2" paint-order="stroke"><text x="419" y="315">© 2015 Microsoft Corporation</text><text x="563" y="315">© 2015 HERE</text></g>
</g></svg>
<div id="viz" class="a"></div>
<div class="a" style="left:1555px;top:76px;width:182px;height:48px;background:#222"></div>
<svg class="a" style="left:1710px;top:90px" width="20" height="20"><path d="M7.5 4l6 6-6 6" stroke="#bbb" stroke-width="1.2" fill="none"/></svg>
<div class="a" style="left:1555px;top:124px;width:182px;height:101px;background:#404040"></div>
<div class="a" style="left:1555px;top:225px;width:182px;height:37px;background:#222"></div>
<div class="a" style="left:1568px;top:260px;width:36px;height:2px;background:#f2c811"></div>
<svg class="a" style="left:1570px;top:232px" width="70" height="24">
<g fill="#fff"><rect x="8" y="6" width="4.4" height="14"/><rect x="13" y="13" width="4.6" height="7"/><rect x="18.4" y="4" width="4.4" height="16"/></g>
<g fill="#9a9a9a"><rect x="12.4" y="13" width="0.6" height="7"/><rect x="17.6" y="13" width="0.8" height="7"/></g>
<g stroke="#d0d0d0" stroke-width="1.3" fill="none">
<rect x="-2.3" y="-8" width="4.6" height="13" rx="2.3" transform="translate(61,9.5) rotate(45)"/>
<path d="M54.5 13 L57.5 16 L53 20.5 Q50 21.5 49 20 Q48.5 19 49.8 17.6 Q51 15.5 54.5 13z"/>
</g>
<circle cx="56" cy="14.5" r="0.9" fill="#d0d0d0"/>
</svg>
<div class="a" style="left:1555px;top:464px;width:182px;height:37px;background:#222"></div>
<div class="t" style="left:1569px;top:476px;font-size:14.5px;font-weight:bold;color:#fff">Filters</div>
<div class="a" style="left:1555px;top:331px;width:182px;height:1px;background:#353535"></div>
<div class="a" style="left:1555px;top:393px;width:182px;height:1px;background:#353535"></div>
<div class="lbl" style="left:1567px;top:271px">Axis</div>
<div class="dz" style="top:290px;height:37px"></div>
<div class="pill" style="top:294px">date</div>
<svg class="a" style="left:1695px;top:296px" width="34" height="18"><path d="M4 8h8l-4 4z" fill="#777"/><path d="M22 5l7 7M29 5l-7 7" stroke="#bbb" stroke-width="1.6"/></svg>
<div class="lbl" style="left:1567px;top:341px">Legend</div>
<div class="dz" style="top:361px;height:28px"></div>
<div class="lbl" style="left:1570px;top:370px;color:#8e8e8e">Drag data fields here</div>
<div class="lbl" style="left:1567px;top:403px">Values</div>
<div class="dz" style="top:422px;height:37px"></div>
<div class="pill" style="top:425px">Count of Rows in sncf...</div>
<svg class="a" style="left:1695px;top:427px" width="34" height="18"><path d="M4 8h8l-4 4z" fill="#777"/><path d="M22 5l7 7M29 5l-7 7" stroke="#bbb" stroke-width="1.6"/></svg>
<div class="lbl" style="left:1567px;top:514px">Visual Level Filters</div>
<div class="dz" style="top:537px;height:62px"></div>
<div class="pill" style="top:540px;padding-left:8px">Count of Rows in sncf_par...</div>
<div class="pill" style="top:566px;padding-left:8px">date (All)</div>
<div class="lbl" style="left:1567px;top:613px">Page Level Filters</div>
<div class="dz" style="top:636px;height:24px"></div>
<div class="lbl" style="left:1569px;top:643px;color:#8e8e8e">Drag data fields here</div>

<svg class="a" style="left:1554px;top:124px" width="183" height="101">
<g transform="translate(10,6)"><path d="M1.5 1v17h17" stroke="#777" stroke-width="1" fill="none"/><rect x="3" y="4" width="5" height="4" fill="#a8a8a8"/><rect x="8" y="4" width="7" height="4" fill="#e8883a"/><rect x="3" y="10" width="7" height="4" fill="#a8a8a8"/><rect x="10" y="10" width="8" height="4" fill="#e8883a"/></g>
<g transform="translate(38.5,6)"><path d="M1.5 1v17h17" stroke="#777" stroke-width="1" fill="none"/><rect x="4" y="12" width="4" height="6" fill="#a8a8a8"/><rect x="4" y="7" width="4" height="5" fill="#e8883a"/><rect x="11" y="12" width="4" height="6" fill="#a8a8a8"/><rect x="11" y="3" width="4" height="9" fill="#e8883a"/></g>
<g transform="translate(67,6)"><path d="M1.5 1v17h17" stroke="#777" stroke-width="1" fill="none"/><rect x="3" y="3" width="9" height="3" fill="#f0c27b"/><rect x="3" y="6" width="14" height="3" fill="#6fa0d8"/><rect x="3" y="10" width="12" height="3" fill="#f0c27b"/><rect x="3" y="13" width="8" height="3" fill="#6fa0d8"/></g>
<g transform="translate(95,6)"><path d="M1.5 1v17h17" stroke="#777" stroke-width="1" fill="none"/><rect x="4" y="9" width="3" height="9" fill="#f0c27b"/><rect x="7" y="3" width="3" height="15" fill="#6fa0d8"/><rect x="11" y="7" width="3" height="11" fill="#f0c27b"/><rect x="14" y="10" width="3" height="8" fill="#6fa0d8"/></g>
<g transform="translate(123,6)"><path d="M1.5 1v17h17" stroke="#777" stroke-width="1" fill="none"/><rect x="3" y="4" width="5" height="4" fill="#a8a8a8"/><rect x="8" y="4" width="9" height="4" fill="#6fa0d8"/><rect x="3" y="10" width="5" height="4" fill="#a8a8a8"/><rect x="8" y="10" width="9" height="4" fill="#6fa0d8"/></g>
<g transform="translate(152,6)"><path d="M1.5 1v17h17" stroke="#777" stroke-width="1" fill="none"/><rect x="4" y="11" width="5" height="7" fill="#a8a8a8"/><rect x="4" y="3" width="5" height="8" fill="#6fa0d8"/><rect x="11" y="11" width="5" height="7" fill="#a8a8a8"/><rect x="11" y="3" width="5" height="8" fill="#6fa0d8"/></g>
<g transform="translate(10,30)"><rect x="-2" y="-2" width="22" height="21" fill="none" stroke="#f2c811" stroke-width="2"/><path d="M1 17l5-7 4 3 4-5 4 3" stroke="#666" fill="none"/><path d="M1 13l5-5 4 3 5-4 3 2" stroke="#666" fill="none"/></g>
<g transform="translate(38.5,30)"><path d="M1.5 1v17h17" stroke="#777" stroke-width="1" fill="none"/><path d="M2 18V8l5-4 5 4 6-3v13z" fill="#e8883a"/><path d="M2 18v-6l5-2 5 3 6-1v6z" fill="#6fa0d8"/><path d="M2 18v-3l5-1 5 2 6-1v3z" fill="#a8a8a8"/></g>
<g transform="translate(67,30)"><path d="M1.5 1v17h17" stroke="#777" stroke-width="1" fill="none"/><rect x="4" y="6" width="3" height="12" fill="#e8883a"/><rect x="9" y="10" width="3" height="8" fill="#e8883a"/><path d="M3 14l5-3 5 2 5-4" stroke="#d9502e" fill="none"/><path d="M18 2v16" stroke="#e8883a"/></g>
<g transform="translate(95,30)"><path d="M1.5 1v17h17" stroke="#777" stroke-width="1" fill="none"/><rect x="4" y="8" width="2.5" height="10" fill="#f0c27b"/><rect x="7" y="4" width="2.5" height="14" fill="#6fa0d8"/><rect x="11" y="8" width="2.5" height="10" fill="#f0c27b"/><path d="M3 14l5-3 5 2 5-4" stroke="#d9502e" fill="none"/><path d="M18 2v16" stroke="#e8883a"/></g>
<g transform="translate(123,30)"><path d="M1.5 1v17h17" stroke="#777" stroke-width="1" fill="none"/><rect x="4" y="6" width="2" height="12" fill="#ddd"/><path d="M8 12v-5h3v8h3v-10" stroke="#d9502e" stroke-width="2" fill="none"/><rect x="15" y="4" width="2" height="14" fill="#ddd"/></g>
<g transform="translate(152,30)"><path d="M1.5 1v17h17" stroke="#777" stroke-width="1" fill="none"/><circle cx="5" cy="12" r="1.5" fill="#6fa0d8"/><circle cx="8" cy="6" r="1.5" fill="#e05a3a"/><circle cx="11" cy="10" r="1.5" fill="#f0c27b"/><circle cx="14" cy="5" r="1.5" fill="#4caf87"/><circle cx="16" cy="11" r="1.5" fill="#6fa0d8"/></g>
<g transform="translate(10,54)"><circle cx="9" cy="9" r="8.5" fill="#6fa0d8"/><path d="M9 9V0.5A8.5 8.5 0 0 0 1 6z" fill="#f3d9b0"/><path d="M9 9L1 6A8.5 8.5 0 0 0 3 15z" fill="#e88a8a"/></g>
<g transform="translate(38.5,54)"><rect x="1" y="1" width="17" height="17" fill="#fff"/><rect x="3" y="3" width="3" height="3" fill="#888"/><rect x="7" y="3" width="10" height="6" fill="#b0c8e8"/><rect x="3" y="7" width="3" height="3" fill="#888"/><path d="M1 10h17M9 10v8" stroke="#888"/></g>
<g transform="translate(67,54)"><circle cx="9" cy="9" r="8" fill="#fff" stroke="#4a8ad0" stroke-width="2"/><path d="M2 9h14M9 1v16M3 5h12M3 13h12" stroke="#6cb59a" stroke-width="1" fill="none"/><ellipse cx="9" cy="9" rx="4" ry="8" stroke="#6cb59a" fill="none"/></g>
<g transform="translate(95,54)"><rect x="1" y="1" width="17" height="17" fill="#fff"/><rect x="1" y="1" width="17" height="3" fill="#4a8ad0"/><path d="M1 8h17M1 13h17M6.5 4v14M12 4v14" stroke="#777" stroke-width="1"/></g>
<g transform="translate(123,54)"><rect x="1" y="1" width="17" height="17" fill="#c8dcf0"/><rect x="1" y="1" width="17" height="3" fill="#4a8ad0"/><path d="M1 8h17M1 13h17M6.5 4v14M12 4v14" stroke="#fff" stroke-width="1"/></g>
<g transform="translate(152,54)"><path d="M1 4l6-1 4 1 5-1v4l-2 3 3 3-4 3-3-2-4 2-3-3 2-3z" fill="#6fa0d8"/><path d="M1 4l6-1 2 3-3 2z" fill="#ddd"/><path d="M16 1l2 1-1 4-2-1z" fill="#f0c27b"/></g>
<g transform="translate(10,78)"><rect x="1" y="3" width="17" height="3" fill="#6fa0d8"/><rect x="3" y="7" width="13" height="3" fill="#f0c27b"/><rect x="5" y="11" width="9" height="3" fill="#6fa0d8"/><rect x="7" y="15" width="5" height="3" fill="#6fa0d8"/></g>
<g transform="translate(38.5,78)"><path d="M2 16A7.5 7.5 0 0 1 17 16" stroke="#e3c07e" stroke-width="4" fill="none"/><path d="M13 9A7.5 7.5 0 0 1 17 16" stroke="#6cb59a" stroke-width="4" fill="none"/><path d="M9.5 16l3-4" stroke="#333" stroke-width="1.5"/></g>
<g transform="translate(67,78)"><rect x="1" y="1" width="17" height="17" fill="#fff"/><path d="M4 3v13" stroke="#888" stroke-width="2"/><path d="M7 5h6M7 9h5M7 13h4" stroke="#4a8ad0" stroke-width="1.5"/></g>
<g transform="translate(95,78)"><rect x="0" y="3" width="19" height="12" fill="#fff"/><text x="9.5" y="12" font-size="8.5" text-anchor="middle" fill="#4a8ad0" font-family="Liberation Sans">123</text><path d="M3 14h13" stroke="#888"/></g>
<g transform="translate(123,78)"><rect x="1" y="1" width="17" height="17" fill="#fff"/><rect x="1" y="1" width="17" height="3" fill="#4a8ad0"/><rect x="3" y="7" width="2" height="2" fill="#e05a3a"/><rect x="3" y="11" width="2" height="2" fill="#f0c27b"/><rect x="3" y="15" width="2" height="2" fill="#e05a3a"/><path d="M10 11h9l-3.5 4v4l-2 -1v-3z" fill="#666"/></g>
<g transform="translate(152,78)"><circle cx="9" cy="9" r="6.5" stroke="#4a8ad0" stroke-width="4" fill="none"/><path d="M9 2.5A6.5 6.5 0 0 1 15.5 8" stroke="#f0c27b" stroke-width="4" fill="none"/><path d="M9 1v3M16 9h3M4 14l-2 2" stroke="#404040" stroke-width="1.5"/></g>
</svg>
<div id="fld" class="a"></div>
<div class="a" style="left:1738px;top:76px;width:182px;height:48px;background:#222"></div>
<div class="t" style="left:1750px;top:90px;font-size:14.5px;font-weight:bold;color:#fff">Fields</div>
<svg class="a" style="left:1893px;top:90px" width="20" height="20"><path d="M7.5 4l6 6-6 6" stroke="#bbb" stroke-width="1.2" fill="none"/></svg>
<svg class="a" style="left:1750px;top:130px" width="40" height="75">
<path d="M8 9.5v8.5l5-4.25z" fill="#999"/><path d="M8 34v8.5l5-4.25z" fill="#999"/><path d="M13 58v8.5h-8.5z" fill="#999"/>
<g fill="#ddd">
<rect x="22" y="8" width="13" height="12"/><rect x="22" y="32" width="13" height="12"/><rect x="22" y="56" width="13" height="12"/>
</g>
<g stroke="#464646" stroke-width="1"><path d="M22 11.5h13M22 14.5h13M22 17.5h13M26.5 11v9M30.5 11v9"/><path d="M22 35.5h13M22 38.5h13M22 41.5h13M26.5 35v9M30.5 35v9"/><path d="M22 59.5h13M22 62.5h13M22 65.5h13M26.5 59v9M30.5 59v9"/></g>
</svg>
<div class="t" style="left:1797px;top:138px;font-size:12px;color:#fff">hivesampletable</div>
<div class="t" style="left:1797px;top:162px;font-size:12px;color:#fff">sncf</div>
<div class="t" style="left:1797px;top:186px;font-size:12px;color:#f2c811">sncf_parquet</div>

<div class="fr" style="top:208.0px"><div class="g"></div><div class="cb"></div><div class="ft">commentaires</div></div>
<div class="fr" style="top:230.1px"><div class="g"></div><div class="cb on"><svg class="a" style="left:1px;top:1px" width="11" height="11"><path d="M2 5.5l2.5 2.5 4.5-5" stroke="#222" stroke-width="1.5" fill="none"/></svg></div><div class="a" style="left:41px;top:3px;width:10px;height:13px;background:#8a8a8a;border:1px solid #aaa"></div><div class="ft">Count of Row...</div></div>
<div class="fr" style="top:252.2px"><div class="g"></div><div class="cb on"><svg class="a" style="left:1px;top:1px" width="11" height="11"><path d="M2 5.5l2.5 2.5 4.5-5" stroke="#222" stroke-width="1.5" fill="none"/></svg></div><div class="ft">date</div></div>
<div class="fr" style="top:274.3px"><div class="g"></div><div class="cb"></div><div class="ft">esr</div></div>
<div class="fr" style="top:296.4px"><div class="g"></div><div class="cb"></div><div class="ft">localisation</div></div>
<div class="fr" style="top:318.5px"><div class="g"></div><div class="cb"></div><div class="ft">type</div></div>
<div class="a" style="left:1059px;top:736px;width:243px;height:75px;background:#333"></div>
<svg class="a" style="left:1301px;top:788px" width="10" height="22"><path d="M0 2l7 8-7 8z" fill="#333"/></svg>
<div class="t" style="left:1071px;top:753px;font-size:9.6px;color:#cfcfcf;letter-spacing:-0.3px;-webkit-text-stroke:0.25px #cfcfcf">LOCALISATION</div>
<div class="t" style="left:1071px;top:770px;font-size:9.6px;color:#cfcfcf;letter-spacing:-0.3px;-webkit-text-stroke:0.25px #cfcfcf">COUNT OF ROWS IN</div>
<div class="t" style="left:1071px;top:787px;font-size:9.6px;color:#cfcfcf;letter-spacing:-0.3px;-webkit-text-stroke:0.25px #cfcfcf">SNCF_PARQUET</div>
<div class="t" style="left:1215px;top:751px;font-size:12px;font-weight:bold;color:#fff;letter-spacing:0.3px">Valence TGV</div>
<div class="t" style="left:1215px;top:768px;font-size:12px;font-weight:bold;color:#fff">2</div>

</body></html>
